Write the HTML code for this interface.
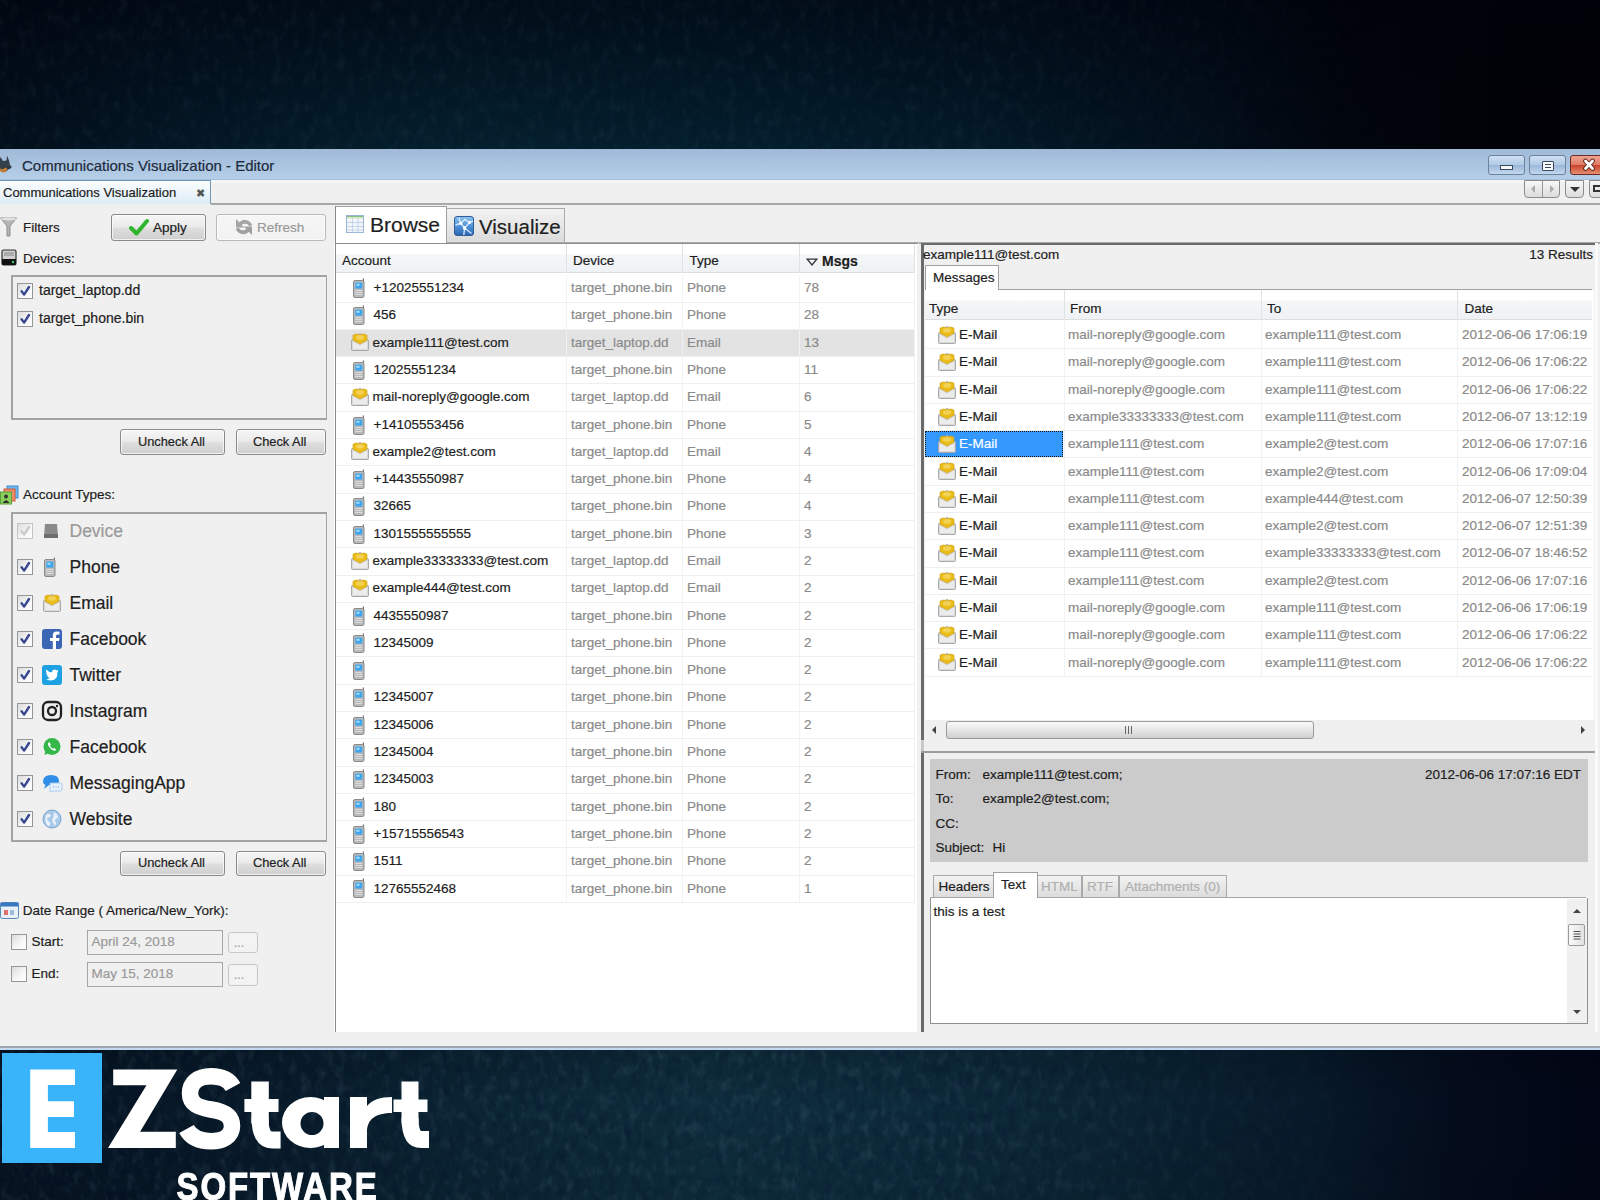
<!DOCTYPE html><html><head><meta charset="utf-8"><style>
html,body{margin:0;padding:0;width:1600px;height:1200px;overflow:hidden}
body{position:relative;font-family:"Liberation Sans",sans-serif;background:#06121f}
.b{position:absolute;display:block}
.t{position:absolute;white-space:nowrap;line-height:1;-webkit-text-stroke:0.2px currentColor}
.bg{position:absolute;left:0;width:1600px}
</style></head><body>
<div class="bg" style="top:0;height:150px;background:linear-gradient(90deg,#03101c 0%,#041826 12%,#05202e 28%,#041f2e 45%,#041a28 62%,#03101c 75%,#02060e 84%,#010208 93%,#010106 100%)"></div>
<div class="bg" style="top:0;height:150px;background:linear-gradient(rgba(0,2,10,.6),rgba(0,2,10,.3) 50%,rgba(0,0,0,0))"></div>
<div class="bg" style="top:1050px;height:150px;background:linear-gradient(90deg,#061422 0%,#081a29 15%,#0b2534 30%,#0e2d3c 45%,#0d2b3b 56%,#0b2433 70%,#081a2a 82%,#040c1c 91%,#020616 100%)"></div>
<div class="bg" style="top:1050px;height:150px;background:linear-gradient(rgba(0,0,0,.12),rgba(0,0,0,0) 35%,rgba(0,0,0,.08))"></div>
<svg class="b" style="left:0;top:0px;opacity:0.5;-webkit-mask-image:linear-gradient(90deg,#000 0%,#000 60%,transparent 88%)" width="1600" height="150"><defs><filter id="nz7" x="0" y="0" width="100%" height="100%"><feTurbulence type="fractalNoise" baseFrequency="0.11 0.07" numOctaves="3" seed="7"/><feColorMatrix values="0 0 0 0 0.5  0 0 0 0 0.72  0 0 0 0 0.85  0 0 0 1.8 -0.85"/></filter><filter id="nd7" x="0" y="0" width="100%" height="100%"><feTurbulence type="fractalNoise" baseFrequency="0.12 0.08" numOctaves="2" seed="18"/><feColorMatrix values="0 0 0 0 0  0 0 0 0 0  0 0 0 0 0.02  0 0 0 1.8 -0.8"/></filter></defs><rect width="1600" height="150" filter="url(#nz7)" opacity="0.12"/><rect width="1600" height="150" filter="url(#nd7)" opacity="0.25"/></svg>
<svg class="b" style="left:0;top:1050px;opacity:1;-webkit-mask-image:linear-gradient(90deg,#000 0%,#000 60%,transparent 88%)" width="1600" height="150"><defs><filter id="nz3" x="0" y="0" width="100%" height="100%"><feTurbulence type="fractalNoise" baseFrequency="0.11 0.07" numOctaves="3" seed="3"/><feColorMatrix values="0 0 0 0 0.5  0 0 0 0 0.72  0 0 0 0 0.85  0 0 0 1.8 -0.85"/></filter><filter id="nd3" x="0" y="0" width="100%" height="100%"><feTurbulence type="fractalNoise" baseFrequency="0.12 0.08" numOctaves="2" seed="14"/><feColorMatrix values="0 0 0 0 0  0 0 0 0 0  0 0 0 0 0.02  0 0 0 1.8 -0.8"/></filter></defs><rect width="1600" height="150" filter="url(#nz3)" opacity="0.12"/><rect width="1600" height="150" filter="url(#nd3)" opacity="0.25"/></svg>
<div class="b" style="left:0.00px;top:149.00px;width:1600.00px;height:31.00px;background:linear-gradient(#9fb9d7,#b6d0ea)"></div>
<div class="b" style="left:0.00px;top:179.00px;width:1600.00px;height:1.00px;background:#7f9cbc;opacity:.35"></div>
<div class="b" style="left:0.00px;top:180.00px;width:1600.00px;height:866.00px;background:#f0f0f0"></div>
<div class="b" style="left:0.00px;top:180.00px;width:1600.00px;height:3.00px;background:#f4f5f6"></div>
<div class="b" style="left:0.00px;top:1046.00px;width:1600.00px;height:2.00px;background:#9fa5ad"></div>
<div class="b" style="left:0.00px;top:1048.00px;width:1600.00px;height:2.00px;background:#c4d9ef"></div>
<svg class="b" style="left:-2.00px;top:154.00px" width="16" height="20" viewBox="0 0 16 20"><path d="M1 8 L2.5 3 L5 7 L8.5 6.5 L9 1.5 L11 6.5 L12 11 L14 13 L11.5 14 Q9 18 5 18 Q1 17 0.5 13 Z" fill="#34404a"/><path d="M1 13 Q3 16 6 14.5 Q8 13 9.5 15 Q8 18.5 5 18.5 Q1.5 18 1 13Z" fill="#c47c30"/><path d="M10 14 L13.5 13 L12 15Z" fill="#222"/></svg>
<div class="t" style="left:22.00px;top:158.25px;font-size:15px;color:#1c2a3c;font-weight:normal;">Communications Visualization - Editor</div>
<div class="b" style="left:1488.00px;top:155.00px;width:37.00px;height:20.00px;border:1px solid #6d8199;border-radius:3px;box-sizing:border-box;background:linear-gradient(#cfe0f3,#b0c9e5 50%,#9bb7d8 52%,#c2d8ef)"></div>
<div class="b" style="left:1500.00px;top:165.00px;width:13.00px;height:5.00px;background:#f4f6f9;border:1px solid #3b4b5f;box-sizing:border-box"></div>
<div class="b" style="left:1529.00px;top:155.00px;width:37.00px;height:20.00px;border:1px solid #6d8199;border-radius:3px;box-sizing:border-box;background:linear-gradient(#cfe0f3,#b0c9e5 50%,#9bb7d8 52%,#c2d8ef)"></div>
<div class="b" style="left:1541.50px;top:160.50px;width:12.50px;height:10.00px;background:#f7f9fb;border:1.3px solid #3b4b5f;border-radius:1px;box-sizing:border-box"></div>
<div class="b" style="left:1544.50px;top:164.00px;width:6.50px;height:1.30px;background:#3b4b5f"></div>
<div class="b" style="left:1544.50px;top:166.50px;width:6.50px;height:1.30px;background:#3b4b5f"></div>
<div class="b" style="left:1570.00px;top:155.00px;width:34.00px;height:20.00px;border:1px solid #6b2a22;border-radius:3px;box-sizing:border-box;background:linear-gradient(#f0a394,#e07b66 48%,#c9452c 52%,#e58f72)"></div>
<svg class="b" style="left:1581.00px;top:158.00px" width="16" height="14" viewBox="0 0 16 14"><path d="M4.5 3 L11.5 10.5 M11.5 3 L4.5 10.5" stroke="#5a2018" stroke-width="4.6" stroke-linecap="round"/><path d="M4.5 3 L11.5 10.5 M11.5 3 L4.5 10.5" stroke="#ffffff" stroke-width="2.8" stroke-linecap="round"/></svg>
<div class="b" style="left:0.00px;top:180.00px;width:211.00px;height:24.00px;background:linear-gradient(#fbfdff,#eef6fb 45%,#dcecf6);border-right:1.5px solid #7597b6;box-sizing:border-box"></div>
<div class="b" style="left:0.00px;top:180.00px;width:211.00px;height:1.30px;background:#6f94b6"></div>
<div class="t" style="left:3.00px;top:185.95px;font-size:13px;color:#1e1e1e;font-weight:normal;">Communications Visualization</div>
<div class="t" style="left:196.00px;top:187.65px;font-size:11px;color:#555;font-weight:normal;">✖</div>
<div class="b" style="left:211.00px;top:203.00px;width:1389.00px;height:2.00px;background:#a9a9a9"></div>
<div class="b" style="left:1524.00px;top:180.00px;width:36.00px;height:18.00px;border:1px solid #8c8c8c;border-radius:0 0 4px 4px;box-sizing:border-box;background:linear-gradient(#f7f7f7,#dcdcdc)"></div>
<div class="b" style="left:1542.00px;top:181.00px;width:1.00px;height:16.00px;background:#999"></div>
<svg class="b" style="left:1528.00px;top:183.00px" width="30" height="12" viewBox="0 0 30 12"><path d="M7 2 L3 6 L7 10Z" fill="#aaa"/><path d="M22 2 L26 6 L22 10Z" fill="#aaa"/></svg>
<div class="b" style="left:1565.00px;top:180.00px;width:19.00px;height:18.00px;border:1px solid #8c8c8c;border-radius:0 0 4px 4px;box-sizing:border-box;background:linear-gradient(#f7f7f7,#dcdcdc)"></div>
<svg class="b" style="left:1568.00px;top:184.00px" width="14" height="10" viewBox="0 0 14 10"><path d="M2 3 L12 3 L7 8Z" fill="#333"/></svg>
<div class="b" style="left:1589.00px;top:180.00px;width:19.00px;height:18.00px;border:1px solid #8c8c8c;border-radius:0 0 4px 4px;box-sizing:border-box;background:linear-gradient(#f7f7f7,#dcdcdc)"></div>
<div class="b" style="left:1593.00px;top:185.00px;width:11.00px;height:7.00px;border:2px solid #333;box-sizing:border-box"></div>
<svg class="b" style="left:0.00px;top:217.00px" width="17" height="21" viewBox="0 0 17 21"><path d="M0.5 1 H16.5 L10 9 V19 L7 19 V9 Z" fill="#b5b5b5" stroke="#8d8d8d" stroke-width="1"/><ellipse cx="8.5" cy="2" rx="8" ry="1.5" fill="#e2e2e2"/></svg>
<div class="t" style="left:23.00px;top:220.53px;font-size:13.5px;color:#1e1e1e;font-weight:normal;">Filters</div>
<div class="b" style="left:111.00px;top:214.00px;width:95.00px;height:27.00px;border:1px solid #8a8a8a;border-radius:3px;box-sizing:border-box;background:linear-gradient(#f6f6f6 0%,#ebebeb 45%,#dddddd 55%,#cfcfcf 100%);box-shadow:inset 0 0 0 1px rgba(255,255,255,.7)"></div>
<svg class="b" style="left:129.00px;top:218.00px" width="20" height="18" viewBox="0 0 20 18"><path d="M2 10 L7.5 15.5 L18 3" fill="none" stroke="#2db52d" stroke-width="4" stroke-linecap="round" stroke-linejoin="round"/></svg>
<div class="t" style="left:153.00px;top:220.53px;font-size:13.5px;color:#1e1e1e;font-weight:normal;">Apply</div>
<div class="b" style="left:216.00px;top:214.00px;width:110.00px;height:27.00px;border:1px solid #b9b9b9;border-radius:3px;box-sizing:border-box;background:linear-gradient(#f6f6f6,#f2f2f2);box-shadow:inset 0 0 0 1px rgba(255,255,255,.7)"></div>
<svg class="b" style="left:235.40px;top:217.70px" width="18" height="18" viewBox="0 0 18 18"><path d="M1 1 V9.5 H9.5 L6.6 6.9 Q9 4.9 12 6.1 Q13.5 6.9 14.2 8.6 L17.2 7.3 Q15.9 3.5 12 2.2 Q7.5 0.8 4.3 4.3 Z" fill="#a6a6a6"/><path d="M17 17 V8.5 H8.5 L11.4 11.1 Q9 13.1 6 11.9 Q4.5 11.1 3.8 9.4 L0.8 10.7 Q2.1 14.5 6 15.8 Q10.5 17.2 13.7 13.7 Z" fill="#a0a0a0"/></svg>
<div class="t" style="left:257.00px;top:220.53px;font-size:13.5px;color:#9a9a9a;font-weight:normal;">Refresh</div>
<svg class="b" style="left:1.00px;top:249.00px" width="16" height="17" viewBox="0 0 16 17"><rect x="1" y="1" width="14" height="15" rx="1.5" fill="#cfcfcf" stroke="#333" stroke-width="1.2"/><rect x="1" y="10" width="14" height="6" fill="#111"/><circle cx="12" cy="13" r="1.2" fill="#3c6"/><path d="M3 4h10M3 6h10" stroke="#888" stroke-width="1"/></svg>
<div class="t" style="left:23.00px;top:251.53px;font-size:13.5px;color:#1e1e1e;font-weight:normal;">Devices:</div>
<div class="b" style="left:11.00px;top:275.00px;width:316.00px;height:145.00px;border:2px solid #a3a3a3;border-right-width:1px;border-bottom-width:2px;box-sizing:border-box;background:#f0f0f0"></div>
<div class="b" style="left:17px;top:283px;width:16px;height:16px;box-sizing:border-box;border:1.3px solid #969696;background:linear-gradient(135deg,#dcdcdc,#f7f7f7 60%,#ffffff)"></div>
<svg class="b" style="left:19.00px;top:285.00px" width="12" height="12" viewBox="0 0 12 12"><path d="M2.6 6.3 L5.1 9.6 L10 2" fill="none" stroke="#3a4890" stroke-width="2.4" stroke-linecap="round" stroke-linejoin="round"/></svg>
<div class="t" style="left:39.00px;top:283.10px;font-size:14px;color:#1e1e1e;font-weight:normal;">target_laptop.dd</div>
<div class="b" style="left:17px;top:311px;width:16px;height:16px;box-sizing:border-box;border:1.3px solid #969696;background:linear-gradient(135deg,#dcdcdc,#f7f7f7 60%,#ffffff)"></div>
<svg class="b" style="left:19.00px;top:313.00px" width="12" height="12" viewBox="0 0 12 12"><path d="M2.6 6.3 L5.1 9.6 L10 2" fill="none" stroke="#3a4890" stroke-width="2.4" stroke-linecap="round" stroke-linejoin="round"/></svg>
<div class="t" style="left:39.00px;top:311.10px;font-size:14px;color:#1e1e1e;font-weight:normal;">target_phone.bin</div>
<div class="b" style="left:120.00px;top:429.00px;width:105.00px;height:26.00px;border:1px solid #8a8a8a;border-radius:3px;box-sizing:border-box;background:linear-gradient(#f6f6f6 0%,#ebebeb 45%,#dddddd 55%,#cfcfcf 100%);box-shadow:inset 0 0 0 1px rgba(255,255,255,.7)"></div>
<div class="t" style="left:138.00px;top:435.62px;font-size:12.8px;color:#1e1e1e;font-weight:normal;">Uncheck All</div>
<div class="b" style="left:236.00px;top:429.00px;width:90.00px;height:26.00px;border:1px solid #8a8a8a;border-radius:3px;box-sizing:border-box;background:linear-gradient(#f6f6f6 0%,#ebebeb 45%,#dddddd 55%,#cfcfcf 100%);box-shadow:inset 0 0 0 1px rgba(255,255,255,.7)"></div>
<div class="t" style="left:253.00px;top:435.62px;font-size:12.8px;color:#1e1e1e;font-weight:normal;">Check All</div>
<svg class="b" style="left:0.00px;top:485.00px" width="20" height="20" viewBox="0 0 20 20"><rect x="7" y="1" width="11" height="12" fill="#6ab8ee" stroke="#3a8fd0" stroke-width="1"/><rect x="4" y="4" width="11" height="12" fill="#f08a6a" stroke="#d05a3a" stroke-width="1"/><rect x="0.5" y="7" width="11" height="12" fill="#8ccf5a" stroke="#5aa03a" stroke-width="1"/><circle cx="6" cy="11.5" r="2" fill="#333"/><path d="M2.5 18 Q6 12.5 9.5 18Z" fill="#333"/></svg>
<div class="t" style="left:23.00px;top:488.02px;font-size:13.5px;color:#1e1e1e;font-weight:normal;">Account Types:</div>
<div class="b" style="left:11.00px;top:512.00px;width:316.00px;height:330.00px;border:2px solid #a3a3a3;border-right-width:1px;box-sizing:border-box;background:#f0f0f0"></div>
<div class="b" style="left:17px;top:523px;width:16px;height:16px;box-sizing:border-box;border:1.3px solid #c4c4c4;background:linear-gradient(135deg,#dcdcdc,#f7f7f7 60%,#ffffff)"></div>
<svg class="b" style="left:19.00px;top:525.00px" width="12" height="12" viewBox="0 0 12 12"><path d="M2.6 6.3 L5.1 9.6 L10 2" fill="none" stroke="#cacaca" stroke-width="2.4" stroke-linecap="round" stroke-linejoin="round"/></svg>
<div class="t" style="left:69.50px;top:523.12px;font-size:17.5px;color:#9a9a9a;font-weight:normal;">Device</div>
<svg class="b" style="left:43.00px;top:523.00px" width="16" height="16" viewBox="0 0 16 16"><path d="M2 1 H14 L15 13 H1Z" fill="#8a8a8a"/><rect x="1" y="11" width="14" height="4" fill="#6d6d6d"/></svg>
<div class="b" style="left:17px;top:559px;width:16px;height:16px;box-sizing:border-box;border:1.3px solid #969696;background:linear-gradient(135deg,#dcdcdc,#f7f7f7 60%,#ffffff)"></div>
<svg class="b" style="left:19.00px;top:561.00px" width="12" height="12" viewBox="0 0 12 12"><path d="M2.6 6.3 L5.1 9.6 L10 2" fill="none" stroke="#3a4890" stroke-width="2.4" stroke-linecap="round" stroke-linejoin="round"/></svg>
<div class="t" style="left:69.50px;top:559.12px;font-size:17.5px;color:#1e1e1e;font-weight:normal;">Phone</div>
<svg class="b" style="left:44.00px;top:557.00px" width="12" height="20" viewBox="0 0 12 20"><path d="M9.8 0.5h1.2v4h-1.2z" fill="#6d6d6d"/><rect x="0.5" y="2.5" width="10.5" height="17" rx="1.5" fill="#b9b9b9" stroke="#8a8a8a" stroke-width="1"/><rect x="2.3" y="4.6" width="7" height="6" fill="#3ea6ee"/><rect x="3.5" y="5.8" width="3" height="2" fill="#a8dcff"/><path d="M2.3 12.5h7M2.3 14.5h7M2.3 16.5h7" stroke="#dcdcdc" stroke-width="1"/></svg>
<div class="b" style="left:17px;top:595px;width:16px;height:16px;box-sizing:border-box;border:1.3px solid #969696;background:linear-gradient(135deg,#dcdcdc,#f7f7f7 60%,#ffffff)"></div>
<svg class="b" style="left:19.00px;top:597.00px" width="12" height="12" viewBox="0 0 12 12"><path d="M2.6 6.3 L5.1 9.6 L10 2" fill="none" stroke="#3a4890" stroke-width="2.4" stroke-linecap="round" stroke-linejoin="round"/></svg>
<div class="t" style="left:69.50px;top:595.12px;font-size:17.5px;color:#1e1e1e;font-weight:normal;">Email</div>
<svg class="b" style="left:43.00px;top:594.00px" width="18" height="18" viewBox="0 0 18 18"><rect x="0.5" y="6.5" width="17" height="11" rx="1" fill="#d9d9d9" stroke="#a9a9a9" stroke-width="1"/><rect x="2" y="9" width="14" height="7" fill="#ececec"/><path d="M0.8 7 L9 12 L17.2 7" fill="none" stroke="#c9c9c9" stroke-width="0.8"/><path d="M2 2.2 Q5 0.2 9 1.6 Q13 0.2 16 2.2 V7.2 L9 11 L2 7.2 Z" fill="#ebbd18" stroke="#c99b10" stroke-width="0.6"/><ellipse cx="9" cy="4.5" rx="4" ry="2.2" fill="#f7dc72" opacity="0.7"/><rect x="8" y="0" width="2" height="1.5" fill="#b8b8b8"/></svg>
<div class="b" style="left:17px;top:631px;width:16px;height:16px;box-sizing:border-box;border:1.3px solid #969696;background:linear-gradient(135deg,#dcdcdc,#f7f7f7 60%,#ffffff)"></div>
<svg class="b" style="left:19.00px;top:633.00px" width="12" height="12" viewBox="0 0 12 12"><path d="M2.6 6.3 L5.1 9.6 L10 2" fill="none" stroke="#3a4890" stroke-width="2.4" stroke-linecap="round" stroke-linejoin="round"/></svg>
<div class="t" style="left:69.50px;top:631.12px;font-size:17.5px;color:#1e1e1e;font-weight:normal;">Facebook</div>
<svg class="b" style="left:41.00px;top:628.00px" width="22" height="22" viewBox="0 0 22 22"><rect x="1" y="1" width="20" height="20" rx="3" fill="#3b65b5"/><path d="M15 21 V13 H18 L18.5 10 H15 V8 Q15 6.5 16.5 6.5 H18.5 V3.8 Q17 3.5 15.5 3.5 Q11.8 3.5 11.8 7.5 V10 H9 V13 H11.8 V21Z" fill="#fff"/></svg>
<div class="b" style="left:17px;top:667px;width:16px;height:16px;box-sizing:border-box;border:1.3px solid #969696;background:linear-gradient(135deg,#dcdcdc,#f7f7f7 60%,#ffffff)"></div>
<svg class="b" style="left:19.00px;top:669.00px" width="12" height="12" viewBox="0 0 12 12"><path d="M2.6 6.3 L5.1 9.6 L10 2" fill="none" stroke="#3a4890" stroke-width="2.4" stroke-linecap="round" stroke-linejoin="round"/></svg>
<div class="t" style="left:69.50px;top:667.12px;font-size:17.5px;color:#1e1e1e;font-weight:normal;">Twitter</div>
<svg class="b" style="left:41.00px;top:664.00px" width="22" height="22" viewBox="0 0 22 22"><rect x="1" y="1" width="20" height="20" rx="3" fill="#1da1e2"/><path d="M17.5 6.5 Q16.8 7 16 7.1 Q16.9 6.5 17.1 5.6 Q16.3 6.1 15.4 6.3 Q14.6 5.4 13.4 5.4 Q11 5.6 11 8.3 Q7.5 8.2 5.2 5.5 Q4.2 7.8 6.2 9.5 Q5.6 9.5 5.1 9.2 Q5.2 11.4 7.3 11.9 Q6.7 12.1 6.1 12 Q6.8 13.8 8.7 13.9 Q6.9 15.3 4.6 15.1 Q6.8 16.5 9.5 16.5 Q17 16.3 16.4 8.2 Q17.1 7.7 17.5 6.5Z" fill="#fff"/></svg>
<div class="b" style="left:17px;top:703px;width:16px;height:16px;box-sizing:border-box;border:1.3px solid #969696;background:linear-gradient(135deg,#dcdcdc,#f7f7f7 60%,#ffffff)"></div>
<svg class="b" style="left:19.00px;top:705.00px" width="12" height="12" viewBox="0 0 12 12"><path d="M2.6 6.3 L5.1 9.6 L10 2" fill="none" stroke="#3a4890" stroke-width="2.4" stroke-linecap="round" stroke-linejoin="round"/></svg>
<div class="t" style="left:69.50px;top:703.12px;font-size:17.5px;color:#1e1e1e;font-weight:normal;">Instagram</div>
<svg class="b" style="left:41.00px;top:700.00px" width="22" height="22" viewBox="0 0 22 22"><rect x="2" y="2" width="18" height="18" rx="5" fill="none" stroke="#222" stroke-width="2.3"/><circle cx="11" cy="11" r="4" fill="none" stroke="#222" stroke-width="2.3"/><circle cx="16" cy="6" r="1.2" fill="#222"/></svg>
<div class="b" style="left:17px;top:739px;width:16px;height:16px;box-sizing:border-box;border:1.3px solid #969696;background:linear-gradient(135deg,#dcdcdc,#f7f7f7 60%,#ffffff)"></div>
<svg class="b" style="left:19.00px;top:741.00px" width="12" height="12" viewBox="0 0 12 12"><path d="M2.6 6.3 L5.1 9.6 L10 2" fill="none" stroke="#3a4890" stroke-width="2.4" stroke-linecap="round" stroke-linejoin="round"/></svg>
<div class="t" style="left:69.50px;top:739.12px;font-size:17.5px;color:#1e1e1e;font-weight:normal;">Facebook</div>
<svg class="b" style="left:42.00px;top:737.00px" width="20" height="20" viewBox="0 0 20 20"><circle cx="10" cy="9.5" r="8.5" fill="#35b84a"/><path d="M2.5 18 L3.5 13 L7 16Z" fill="#35b84a"/><path d="M6.5 5.5 Q5.5 6.5 6.5 9 Q8.5 12.5 11.5 13.5 Q13.5 14.2 14 12.5 L12.3 11 L11 11.8 Q9 10.8 8 8.7 L8.8 7.5 L7.6 5.3Z" fill="#fff"/></svg>
<div class="b" style="left:17px;top:775px;width:16px;height:16px;box-sizing:border-box;border:1.3px solid #969696;background:linear-gradient(135deg,#dcdcdc,#f7f7f7 60%,#ffffff)"></div>
<svg class="b" style="left:19.00px;top:777.00px" width="12" height="12" viewBox="0 0 12 12"><path d="M2.6 6.3 L5.1 9.6 L10 2" fill="none" stroke="#3a4890" stroke-width="2.4" stroke-linecap="round" stroke-linejoin="round"/></svg>
<div class="t" style="left:69.50px;top:775.12px;font-size:17.5px;color:#1e1e1e;font-weight:normal;">MessagingApp</div>
<svg class="b" style="left:41.00px;top:773.00px" width="22" height="20" viewBox="0 0 22 20"><path d="M2 9 Q2 2 10 2 Q18 2 18 8 Q18 11 15 12 H8 L3 16 L4.5 12 Q2 11 2 9Z" fill="#2f8ee8"/><path d="M9 10 H19 Q21 10 21 12 V16 Q21 18 19 18 H12 L9 19Z" fill="#e8f2fc" stroke="#9cc4ec" stroke-width="0.8"/><path d="M12 14h1M14.5 14h1M17 14h1" stroke="#5a9ad8" stroke-width="1.2"/></svg>
<div class="b" style="left:17px;top:811px;width:16px;height:16px;box-sizing:border-box;border:1.3px solid #969696;background:linear-gradient(135deg,#dcdcdc,#f7f7f7 60%,#ffffff)"></div>
<svg class="b" style="left:19.00px;top:813.00px" width="12" height="12" viewBox="0 0 12 12"><path d="M2.6 6.3 L5.1 9.6 L10 2" fill="none" stroke="#3a4890" stroke-width="2.4" stroke-linecap="round" stroke-linejoin="round"/></svg>
<div class="t" style="left:69.50px;top:811.12px;font-size:17.5px;color:#1e1e1e;font-weight:normal;">Website</div>
<svg class="b" style="left:42.00px;top:809.00px" width="20" height="20" viewBox="0 0 20 20"><circle cx="10" cy="10" r="9" fill="#a9c9e8" stroke="#7ba3cc" stroke-width="1"/><path d="M4 6 Q7 4 9 6 Q8 9 5 9 Q5 12 8 13 Q9 17 6 17 Q2 13 4 6Z" fill="#e9f2fb"/><path d="M12 3 Q16 5 16 9 Q13 9 13 12 Q15 14 13 17 Q11 14 10 11 Q12 8 12 3Z" fill="#e9f2fb"/></svg>
<div class="b" style="left:120.00px;top:851.00px;width:105.00px;height:25.00px;border:1px solid #8a8a8a;border-radius:3px;box-sizing:border-box;background:linear-gradient(#f6f6f6 0%,#ebebeb 45%,#dddddd 55%,#cfcfcf 100%);box-shadow:inset 0 0 0 1px rgba(255,255,255,.7)"></div>
<div class="t" style="left:138.00px;top:857.12px;font-size:12.8px;color:#1e1e1e;font-weight:normal;">Uncheck All</div>
<div class="b" style="left:236.00px;top:851.00px;width:90.00px;height:25.00px;border:1px solid #8a8a8a;border-radius:3px;box-sizing:border-box;background:linear-gradient(#f6f6f6 0%,#ebebeb 45%,#dddddd 55%,#cfcfcf 100%);box-shadow:inset 0 0 0 1px rgba(255,255,255,.7)"></div>
<div class="t" style="left:253.00px;top:857.12px;font-size:12.8px;color:#1e1e1e;font-weight:normal;">Check All</div>
<svg class="b" style="left:0.00px;top:901.00px" width="19" height="18" viewBox="0 0 19 18"><rect x="0.5" y="1.5" width="18" height="16" rx="2" fill="#e8f0f8" stroke="#5a88b8" stroke-width="1"/><rect x="0.5" y="1.5" width="18" height="4" fill="#3a78c0"/><path d="M4 9 h4 v5 h-4z" fill="#e05050" opacity=".8"/><path d="M10 9 h4 v5 h-4z" fill="#6a9ad0" opacity=".6"/></svg>
<div class="t" style="left:22.70px;top:904.02px;font-size:13.5px;color:#1e1e1e;font-weight:normal;">Date Range ( America/New_York):</div>
<div class="b" style="left:11px;top:934px;width:16px;height:16px;box-sizing:border-box;border:1.3px solid #969696;background:linear-gradient(135deg,#dcdcdc,#f7f7f7 60%,#ffffff)"></div>
<div class="t" style="left:31.40px;top:934.52px;font-size:13.5px;color:#1e1e1e;font-weight:normal;">Start:</div>
<div class="b" style="left:87.00px;top:930.00px;width:136.00px;height:25.00px;border:1px solid #a5a5a5;box-sizing:border-box;background:#f0f0f0"></div>
<div class="t" style="left:91.50px;top:934.52px;font-size:13.5px;color:#9a9a9a;font-weight:normal;">April 24, 2018</div>
<div class="b" style="left:228.00px;top:932.00px;width:30.00px;height:21.00px;border:1px solid #c7c7c7;border-radius:3px;box-sizing:border-box;background:#f3f3f3"></div>
<div class="t" style="left:234.00px;top:936.80px;font-size:12px;color:#a0a0a0;font-weight:normal;">...</div>
<div class="b" style="left:11px;top:966px;width:16px;height:16px;box-sizing:border-box;border:1.3px solid #969696;background:linear-gradient(135deg,#dcdcdc,#f7f7f7 60%,#ffffff)"></div>
<div class="t" style="left:31.40px;top:966.52px;font-size:13.5px;color:#1e1e1e;font-weight:normal;">End:</div>
<div class="b" style="left:87.00px;top:962.00px;width:136.00px;height:25.00px;border:1px solid #a5a5a5;box-sizing:border-box;background:#f0f0f0"></div>
<div class="t" style="left:91.50px;top:966.52px;font-size:13.5px;color:#9a9a9a;font-weight:normal;">May 15, 2018</div>
<div class="b" style="left:228.00px;top:964.00px;width:30.00px;height:22.00px;border:1px solid #c7c7c7;border-radius:3px;box-sizing:border-box;background:#f3f3f3"></div>
<div class="t" style="left:234.00px;top:968.80px;font-size:12px;color:#a0a0a0;font-weight:normal;">...</div>
<div class="b" style="left:335.00px;top:206.00px;width:112.00px;height:39.00px;background:#fff;border:1px solid #a0a0a0;border-bottom:none;box-sizing:border-box"></div>
<div class="b" style="left:447.00px;top:208.00px;width:118.00px;height:36.00px;background:linear-gradient(#f2f2f2,#dadada);border:1px solid #a9a9a9;border-bottom:none;border-left:none;box-sizing:border-box"></div>
<div class="b" style="left:447.00px;top:242.00px;width:1153.00px;height:2.00px;background:#a9a9a9"></div>
<svg class="b" style="left:346.00px;top:215.00px" width="18" height="18" viewBox="0 0 18 18"><rect x="0.5" y="0.5" width="17" height="17" fill="#f2f6fb" stroke="#9bb5d6" stroke-width="1"/><rect x="1" y="1" width="16" height="2.5" fill="#cfe6c8"/><path d="M1 1.5 H17" stroke="#8cc080" stroke-width="1"/><path d="M1 7.5h16M1 11.5h16M1 15h16M6.5 3.5v14M12 3.5v14" stroke="#c3d4ea" stroke-width="1"/></svg>
<div class="t" style="left:370.00px;top:214.15px;font-size:21px;color:#1e1e1e;font-weight:normal;">Browse</div>
<svg class="b" style="left:454.00px;top:216.00px" width="20" height="20" viewBox="0 0 20 20"><defs><linearGradient id="vg" x1="0" y1="0" x2="0" y2="1"><stop offset="0" stop-color="#8cc4f2"/><stop offset="0.5" stop-color="#4f93d8"/><stop offset="1" stop-color="#2a66b0"/></linearGradient></defs><rect x="0.5" y="0.5" width="19" height="19" rx="2.5" fill="url(#vg)" stroke="#2f5f98" stroke-width="1"/><path d="M1.5 9 L6.7 7.3 L10.6 12 L15.5 6.5 L19 5 M6.7 7.3 L5 2 M10.6 12 L9.8 19 M10.6 12 L17.5 17.5 M6.7 7.3 L11 3.5 L15.5 6.5" fill="none" stroke="#e4f2ff" stroke-width="1.4" opacity="0.9"/><circle cx="6.7" cy="7.3" r="1.6" fill="#fff"/><circle cx="15.5" cy="6.5" r="1.5" fill="#fff"/><circle cx="10.6" cy="12" r="1.7" fill="#fff"/></svg>
<div class="t" style="left:479.00px;top:217.07px;font-size:20.5px;color:#1e1e1e;font-weight:normal;">Visualize</div>
<div class="b" style="left:334.00px;top:243.00px;width:585.00px;height:789.00px;background:#fff"></div>
<div class="b" style="left:334.50px;top:206.00px;width:1.50px;height:826.00px;background:#8a8a8a"></div>
<div class="b" style="left:336.00px;top:242.80px;width:582.00px;height:1.70px;background:#8f8f8f"></div>
<div class="b" style="left:917.00px;top:244.00px;width:4.00px;height:788.00px;background:#f0f0f0"></div>
<div class="b" style="left:336.00px;top:244.50px;width:579.00px;height:28.50px;background:linear-gradient(#ffffff 0%,#ffffff 33%,#f4f6f8 36%,#eff2f5 100%);border-bottom:1px solid #dedede;box-sizing:border-box"></div>
<div class="b" style="left:566.00px;top:244.00px;width:1.00px;height:29.00px;background:#e2e2e2"></div>
<div class="b" style="left:682.00px;top:244.00px;width:1.00px;height:29.00px;background:#e2e2e2"></div>
<div class="b" style="left:799.00px;top:244.00px;width:1.00px;height:29.00px;background:#e2e2e2"></div>
<div class="b" style="left:914.00px;top:244.00px;width:1.00px;height:29.00px;background:#e2e2e2"></div>
<div class="t" style="left:342.00px;top:253.53px;font-size:13.5px;color:#1e1e1e;font-weight:normal;">Account</div>
<div class="t" style="left:573.00px;top:253.53px;font-size:13.5px;color:#1e1e1e;font-weight:normal;">Device</div>
<div class="t" style="left:689.50px;top:253.53px;font-size:13.5px;color:#1e1e1e;font-weight:normal;">Type</div>
<svg class="b" style="left:806.00px;top:257.50px" width="12" height="8" viewBox="0 0 12 8"><path d="M1.2 1.2 H10.8 L6 7Z" fill="none" stroke="#333" stroke-width="1.3"/></svg>
<div class="t" style="left:822.00px;top:253.60px;font-size:14px;color:#1e1e1e;font-weight:bold;">Msgs</div>
<div class="b" style="left:336.00px;top:301.60px;width:579.00px;height:1.00px;background:#efefef"></div>
<div class="b" style="left:566.00px;top:274.81px;width:1.00px;height:27.29px;background:#f2f2f2"></div>
<div class="b" style="left:682.00px;top:274.81px;width:1.00px;height:27.29px;background:#f2f2f2"></div>
<div class="b" style="left:799.00px;top:274.81px;width:1.00px;height:27.29px;background:#f2f2f2"></div>
<div class="b" style="left:914.00px;top:274.81px;width:1.00px;height:27.29px;background:#f2f2f2"></div>
<svg class="b" style="left:353.00px;top:278.10px" width="12" height="20" viewBox="0 0 12 20"><path d="M9.8 0.5h1.2v4h-1.2z" fill="#6d6d6d"/><rect x="0.5" y="2.5" width="10.5" height="17" rx="1.5" fill="#b9b9b9" stroke="#8a8a8a" stroke-width="1"/><rect x="2.3" y="4.6" width="7" height="6" fill="#3ea6ee"/><rect x="3.5" y="5.8" width="3" height="2" fill="#a8dcff"/><path d="M2.3 12.5h7M2.3 14.5h7M2.3 16.5h7" stroke="#dcdcdc" stroke-width="1"/></svg>
<div class="t" style="left:373.50px;top:281.12px;font-size:13.5px;color:#1e1e1e;font-weight:normal;">+12025551234</div>
<div class="t" style="left:571.00px;top:281.12px;font-size:13.5px;color:#8a8a8a;font-weight:normal;">target_phone.bin</div>
<div class="t" style="left:687.00px;top:281.12px;font-size:13.5px;color:#8a8a8a;font-weight:normal;">Phone</div>
<div class="t" style="left:804.00px;top:281.12px;font-size:13.5px;color:#8a8a8a;font-weight:normal;">78</div>
<div class="b" style="left:336.00px;top:328.89px;width:579.00px;height:1.00px;background:#efefef"></div>
<div class="b" style="left:566.00px;top:302.10px;width:1.00px;height:27.29px;background:#f2f2f2"></div>
<div class="b" style="left:682.00px;top:302.10px;width:1.00px;height:27.29px;background:#f2f2f2"></div>
<div class="b" style="left:799.00px;top:302.10px;width:1.00px;height:27.29px;background:#f2f2f2"></div>
<div class="b" style="left:914.00px;top:302.10px;width:1.00px;height:27.29px;background:#f2f2f2"></div>
<svg class="b" style="left:353.00px;top:305.39px" width="12" height="20" viewBox="0 0 12 20"><path d="M9.8 0.5h1.2v4h-1.2z" fill="#6d6d6d"/><rect x="0.5" y="2.5" width="10.5" height="17" rx="1.5" fill="#b9b9b9" stroke="#8a8a8a" stroke-width="1"/><rect x="2.3" y="4.6" width="7" height="6" fill="#3ea6ee"/><rect x="3.5" y="5.8" width="3" height="2" fill="#a8dcff"/><path d="M2.3 12.5h7M2.3 14.5h7M2.3 16.5h7" stroke="#dcdcdc" stroke-width="1"/></svg>
<div class="t" style="left:373.50px;top:308.42px;font-size:13.5px;color:#1e1e1e;font-weight:normal;">456</div>
<div class="t" style="left:571.00px;top:308.42px;font-size:13.5px;color:#8a8a8a;font-weight:normal;">target_phone.bin</div>
<div class="t" style="left:687.00px;top:308.42px;font-size:13.5px;color:#8a8a8a;font-weight:normal;">Phone</div>
<div class="t" style="left:804.00px;top:308.42px;font-size:13.5px;color:#8a8a8a;font-weight:normal;">28</div>
<div class="b" style="left:336.00px;top:329.89px;width:579.00px;height:27.29px;background:#e3e3e3"></div>
<div class="b" style="left:336.00px;top:356.18px;width:579.00px;height:1.00px;background:#efefef"></div>
<div class="b" style="left:566.00px;top:329.39px;width:1.00px;height:27.29px;background:#f2f2f2"></div>
<div class="b" style="left:682.00px;top:329.39px;width:1.00px;height:27.29px;background:#f2f2f2"></div>
<div class="b" style="left:799.00px;top:329.39px;width:1.00px;height:27.29px;background:#f2f2f2"></div>
<div class="b" style="left:914.00px;top:329.39px;width:1.00px;height:27.29px;background:#f2f2f2"></div>
<svg class="b" style="left:350.50px;top:333.18px" width="18" height="18" viewBox="0 0 18 18"><rect x="0.5" y="6.5" width="17" height="11" rx="1" fill="#d9d9d9" stroke="#a9a9a9" stroke-width="1"/><rect x="2" y="9" width="14" height="7" fill="#ececec"/><path d="M0.8 7 L9 12 L17.2 7" fill="none" stroke="#c9c9c9" stroke-width="0.8"/><path d="M2 2.2 Q5 0.2 9 1.6 Q13 0.2 16 2.2 V7.2 L9 11 L2 7.2 Z" fill="#ebbd18" stroke="#c99b10" stroke-width="0.6"/><ellipse cx="9" cy="4.5" rx="4" ry="2.2" fill="#f7dc72" opacity="0.7"/><rect x="8" y="0" width="2" height="1.5" fill="#b8b8b8"/></svg>
<div class="t" style="left:372.50px;top:335.70px;font-size:13.5px;color:#1e1e1e;font-weight:normal;">example111@test.com</div>
<div class="t" style="left:571.00px;top:335.70px;font-size:13.5px;color:#8a8a8a;font-weight:normal;">target_laptop.dd</div>
<div class="t" style="left:687.00px;top:335.70px;font-size:13.5px;color:#8a8a8a;font-weight:normal;">Email</div>
<div class="t" style="left:804.00px;top:335.70px;font-size:13.5px;color:#8a8a8a;font-weight:normal;">13</div>
<div class="b" style="left:336.00px;top:383.47px;width:579.00px;height:1.00px;background:#efefef"></div>
<div class="b" style="left:566.00px;top:356.68px;width:1.00px;height:27.29px;background:#f2f2f2"></div>
<div class="b" style="left:682.00px;top:356.68px;width:1.00px;height:27.29px;background:#f2f2f2"></div>
<div class="b" style="left:799.00px;top:356.68px;width:1.00px;height:27.29px;background:#f2f2f2"></div>
<div class="b" style="left:914.00px;top:356.68px;width:1.00px;height:27.29px;background:#f2f2f2"></div>
<svg class="b" style="left:353.00px;top:359.97px" width="12" height="20" viewBox="0 0 12 20"><path d="M9.8 0.5h1.2v4h-1.2z" fill="#6d6d6d"/><rect x="0.5" y="2.5" width="10.5" height="17" rx="1.5" fill="#b9b9b9" stroke="#8a8a8a" stroke-width="1"/><rect x="2.3" y="4.6" width="7" height="6" fill="#3ea6ee"/><rect x="3.5" y="5.8" width="3" height="2" fill="#a8dcff"/><path d="M2.3 12.5h7M2.3 14.5h7M2.3 16.5h7" stroke="#dcdcdc" stroke-width="1"/></svg>
<div class="t" style="left:373.50px;top:363.00px;font-size:13.5px;color:#1e1e1e;font-weight:normal;">12025551234</div>
<div class="t" style="left:571.00px;top:363.00px;font-size:13.5px;color:#8a8a8a;font-weight:normal;">target_phone.bin</div>
<div class="t" style="left:687.00px;top:363.00px;font-size:13.5px;color:#8a8a8a;font-weight:normal;">Phone</div>
<div class="t" style="left:804.00px;top:363.00px;font-size:13.5px;color:#8a8a8a;font-weight:normal;">11</div>
<div class="b" style="left:336.00px;top:410.76px;width:579.00px;height:1.00px;background:#efefef"></div>
<div class="b" style="left:566.00px;top:383.97px;width:1.00px;height:27.29px;background:#f2f2f2"></div>
<div class="b" style="left:682.00px;top:383.97px;width:1.00px;height:27.29px;background:#f2f2f2"></div>
<div class="b" style="left:799.00px;top:383.97px;width:1.00px;height:27.29px;background:#f2f2f2"></div>
<div class="b" style="left:914.00px;top:383.97px;width:1.00px;height:27.29px;background:#f2f2f2"></div>
<svg class="b" style="left:350.50px;top:387.76px" width="18" height="18" viewBox="0 0 18 18"><rect x="0.5" y="6.5" width="17" height="11" rx="1" fill="#d9d9d9" stroke="#a9a9a9" stroke-width="1"/><rect x="2" y="9" width="14" height="7" fill="#ececec"/><path d="M0.8 7 L9 12 L17.2 7" fill="none" stroke="#c9c9c9" stroke-width="0.8"/><path d="M2 2.2 Q5 0.2 9 1.6 Q13 0.2 16 2.2 V7.2 L9 11 L2 7.2 Z" fill="#ebbd18" stroke="#c99b10" stroke-width="0.6"/><ellipse cx="9" cy="4.5" rx="4" ry="2.2" fill="#f7dc72" opacity="0.7"/><rect x="8" y="0" width="2" height="1.5" fill="#b8b8b8"/></svg>
<div class="t" style="left:372.50px;top:390.28px;font-size:13.5px;color:#1e1e1e;font-weight:normal;">mail-noreply@google.com</div>
<div class="t" style="left:571.00px;top:390.28px;font-size:13.5px;color:#8a8a8a;font-weight:normal;">target_laptop.dd</div>
<div class="t" style="left:687.00px;top:390.28px;font-size:13.5px;color:#8a8a8a;font-weight:normal;">Email</div>
<div class="t" style="left:804.00px;top:390.28px;font-size:13.5px;color:#8a8a8a;font-weight:normal;">6</div>
<div class="b" style="left:336.00px;top:438.05px;width:579.00px;height:1.00px;background:#efefef"></div>
<div class="b" style="left:566.00px;top:411.26px;width:1.00px;height:27.29px;background:#f2f2f2"></div>
<div class="b" style="left:682.00px;top:411.26px;width:1.00px;height:27.29px;background:#f2f2f2"></div>
<div class="b" style="left:799.00px;top:411.26px;width:1.00px;height:27.29px;background:#f2f2f2"></div>
<div class="b" style="left:914.00px;top:411.26px;width:1.00px;height:27.29px;background:#f2f2f2"></div>
<svg class="b" style="left:353.00px;top:414.55px" width="12" height="20" viewBox="0 0 12 20"><path d="M9.8 0.5h1.2v4h-1.2z" fill="#6d6d6d"/><rect x="0.5" y="2.5" width="10.5" height="17" rx="1.5" fill="#b9b9b9" stroke="#8a8a8a" stroke-width="1"/><rect x="2.3" y="4.6" width="7" height="6" fill="#3ea6ee"/><rect x="3.5" y="5.8" width="3" height="2" fill="#a8dcff"/><path d="M2.3 12.5h7M2.3 14.5h7M2.3 16.5h7" stroke="#dcdcdc" stroke-width="1"/></svg>
<div class="t" style="left:373.50px;top:417.57px;font-size:13.5px;color:#1e1e1e;font-weight:normal;">+14105553456</div>
<div class="t" style="left:571.00px;top:417.57px;font-size:13.5px;color:#8a8a8a;font-weight:normal;">target_phone.bin</div>
<div class="t" style="left:687.00px;top:417.57px;font-size:13.5px;color:#8a8a8a;font-weight:normal;">Phone</div>
<div class="t" style="left:804.00px;top:417.57px;font-size:13.5px;color:#8a8a8a;font-weight:normal;">5</div>
<div class="b" style="left:336.00px;top:465.34px;width:579.00px;height:1.00px;background:#efefef"></div>
<div class="b" style="left:566.00px;top:438.55px;width:1.00px;height:27.29px;background:#f2f2f2"></div>
<div class="b" style="left:682.00px;top:438.55px;width:1.00px;height:27.29px;background:#f2f2f2"></div>
<div class="b" style="left:799.00px;top:438.55px;width:1.00px;height:27.29px;background:#f2f2f2"></div>
<div class="b" style="left:914.00px;top:438.55px;width:1.00px;height:27.29px;background:#f2f2f2"></div>
<svg class="b" style="left:350.50px;top:442.34px" width="18" height="18" viewBox="0 0 18 18"><rect x="0.5" y="6.5" width="17" height="11" rx="1" fill="#d9d9d9" stroke="#a9a9a9" stroke-width="1"/><rect x="2" y="9" width="14" height="7" fill="#ececec"/><path d="M0.8 7 L9 12 L17.2 7" fill="none" stroke="#c9c9c9" stroke-width="0.8"/><path d="M2 2.2 Q5 0.2 9 1.6 Q13 0.2 16 2.2 V7.2 L9 11 L2 7.2 Z" fill="#ebbd18" stroke="#c99b10" stroke-width="0.6"/><ellipse cx="9" cy="4.5" rx="4" ry="2.2" fill="#f7dc72" opacity="0.7"/><rect x="8" y="0" width="2" height="1.5" fill="#b8b8b8"/></svg>
<div class="t" style="left:372.50px;top:444.87px;font-size:13.5px;color:#1e1e1e;font-weight:normal;">example2@test.com</div>
<div class="t" style="left:571.00px;top:444.87px;font-size:13.5px;color:#8a8a8a;font-weight:normal;">target_laptop.dd</div>
<div class="t" style="left:687.00px;top:444.87px;font-size:13.5px;color:#8a8a8a;font-weight:normal;">Email</div>
<div class="t" style="left:804.00px;top:444.87px;font-size:13.5px;color:#8a8a8a;font-weight:normal;">4</div>
<div class="b" style="left:336.00px;top:492.63px;width:579.00px;height:1.00px;background:#efefef"></div>
<div class="b" style="left:566.00px;top:465.84px;width:1.00px;height:27.29px;background:#f2f2f2"></div>
<div class="b" style="left:682.00px;top:465.84px;width:1.00px;height:27.29px;background:#f2f2f2"></div>
<div class="b" style="left:799.00px;top:465.84px;width:1.00px;height:27.29px;background:#f2f2f2"></div>
<div class="b" style="left:914.00px;top:465.84px;width:1.00px;height:27.29px;background:#f2f2f2"></div>
<svg class="b" style="left:353.00px;top:469.13px" width="12" height="20" viewBox="0 0 12 20"><path d="M9.8 0.5h1.2v4h-1.2z" fill="#6d6d6d"/><rect x="0.5" y="2.5" width="10.5" height="17" rx="1.5" fill="#b9b9b9" stroke="#8a8a8a" stroke-width="1"/><rect x="2.3" y="4.6" width="7" height="6" fill="#3ea6ee"/><rect x="3.5" y="5.8" width="3" height="2" fill="#a8dcff"/><path d="M2.3 12.5h7M2.3 14.5h7M2.3 16.5h7" stroke="#dcdcdc" stroke-width="1"/></svg>
<div class="t" style="left:373.50px;top:472.15px;font-size:13.5px;color:#1e1e1e;font-weight:normal;">+14435550987</div>
<div class="t" style="left:571.00px;top:472.15px;font-size:13.5px;color:#8a8a8a;font-weight:normal;">target_phone.bin</div>
<div class="t" style="left:687.00px;top:472.15px;font-size:13.5px;color:#8a8a8a;font-weight:normal;">Phone</div>
<div class="t" style="left:804.00px;top:472.15px;font-size:13.5px;color:#8a8a8a;font-weight:normal;">4</div>
<div class="b" style="left:336.00px;top:519.92px;width:579.00px;height:1.00px;background:#efefef"></div>
<div class="b" style="left:566.00px;top:493.13px;width:1.00px;height:27.29px;background:#f2f2f2"></div>
<div class="b" style="left:682.00px;top:493.13px;width:1.00px;height:27.29px;background:#f2f2f2"></div>
<div class="b" style="left:799.00px;top:493.13px;width:1.00px;height:27.29px;background:#f2f2f2"></div>
<div class="b" style="left:914.00px;top:493.13px;width:1.00px;height:27.29px;background:#f2f2f2"></div>
<svg class="b" style="left:353.00px;top:496.42px" width="12" height="20" viewBox="0 0 12 20"><path d="M9.8 0.5h1.2v4h-1.2z" fill="#6d6d6d"/><rect x="0.5" y="2.5" width="10.5" height="17" rx="1.5" fill="#b9b9b9" stroke="#8a8a8a" stroke-width="1"/><rect x="2.3" y="4.6" width="7" height="6" fill="#3ea6ee"/><rect x="3.5" y="5.8" width="3" height="2" fill="#a8dcff"/><path d="M2.3 12.5h7M2.3 14.5h7M2.3 16.5h7" stroke="#dcdcdc" stroke-width="1"/></svg>
<div class="t" style="left:373.50px;top:499.45px;font-size:13.5px;color:#1e1e1e;font-weight:normal;">32665</div>
<div class="t" style="left:571.00px;top:499.45px;font-size:13.5px;color:#8a8a8a;font-weight:normal;">target_phone.bin</div>
<div class="t" style="left:687.00px;top:499.45px;font-size:13.5px;color:#8a8a8a;font-weight:normal;">Phone</div>
<div class="t" style="left:804.00px;top:499.45px;font-size:13.5px;color:#8a8a8a;font-weight:normal;">4</div>
<div class="b" style="left:336.00px;top:547.21px;width:579.00px;height:1.00px;background:#efefef"></div>
<div class="b" style="left:566.00px;top:520.42px;width:1.00px;height:27.29px;background:#f2f2f2"></div>
<div class="b" style="left:682.00px;top:520.42px;width:1.00px;height:27.29px;background:#f2f2f2"></div>
<div class="b" style="left:799.00px;top:520.42px;width:1.00px;height:27.29px;background:#f2f2f2"></div>
<div class="b" style="left:914.00px;top:520.42px;width:1.00px;height:27.29px;background:#f2f2f2"></div>
<svg class="b" style="left:353.00px;top:523.71px" width="12" height="20" viewBox="0 0 12 20"><path d="M9.8 0.5h1.2v4h-1.2z" fill="#6d6d6d"/><rect x="0.5" y="2.5" width="10.5" height="17" rx="1.5" fill="#b9b9b9" stroke="#8a8a8a" stroke-width="1"/><rect x="2.3" y="4.6" width="7" height="6" fill="#3ea6ee"/><rect x="3.5" y="5.8" width="3" height="2" fill="#a8dcff"/><path d="M2.3 12.5h7M2.3 14.5h7M2.3 16.5h7" stroke="#dcdcdc" stroke-width="1"/></svg>
<div class="t" style="left:373.50px;top:526.74px;font-size:13.5px;color:#1e1e1e;font-weight:normal;">1301555555555</div>
<div class="t" style="left:571.00px;top:526.74px;font-size:13.5px;color:#8a8a8a;font-weight:normal;">target_phone.bin</div>
<div class="t" style="left:687.00px;top:526.74px;font-size:13.5px;color:#8a8a8a;font-weight:normal;">Phone</div>
<div class="t" style="left:804.00px;top:526.74px;font-size:13.5px;color:#8a8a8a;font-weight:normal;">3</div>
<div class="b" style="left:336.00px;top:574.50px;width:579.00px;height:1.00px;background:#efefef"></div>
<div class="b" style="left:566.00px;top:547.71px;width:1.00px;height:27.29px;background:#f2f2f2"></div>
<div class="b" style="left:682.00px;top:547.71px;width:1.00px;height:27.29px;background:#f2f2f2"></div>
<div class="b" style="left:799.00px;top:547.71px;width:1.00px;height:27.29px;background:#f2f2f2"></div>
<div class="b" style="left:914.00px;top:547.71px;width:1.00px;height:27.29px;background:#f2f2f2"></div>
<svg class="b" style="left:350.50px;top:551.50px" width="18" height="18" viewBox="0 0 18 18"><rect x="0.5" y="6.5" width="17" height="11" rx="1" fill="#d9d9d9" stroke="#a9a9a9" stroke-width="1"/><rect x="2" y="9" width="14" height="7" fill="#ececec"/><path d="M0.8 7 L9 12 L17.2 7" fill="none" stroke="#c9c9c9" stroke-width="0.8"/><path d="M2 2.2 Q5 0.2 9 1.6 Q13 0.2 16 2.2 V7.2 L9 11 L2 7.2 Z" fill="#ebbd18" stroke="#c99b10" stroke-width="0.6"/><ellipse cx="9" cy="4.5" rx="4" ry="2.2" fill="#f7dc72" opacity="0.7"/><rect x="8" y="0" width="2" height="1.5" fill="#b8b8b8"/></svg>
<div class="t" style="left:372.50px;top:554.02px;font-size:13.5px;color:#1e1e1e;font-weight:normal;">example33333333@test.com</div>
<div class="t" style="left:571.00px;top:554.02px;font-size:13.5px;color:#8a8a8a;font-weight:normal;">target_laptop.dd</div>
<div class="t" style="left:687.00px;top:554.02px;font-size:13.5px;color:#8a8a8a;font-weight:normal;">Email</div>
<div class="t" style="left:804.00px;top:554.02px;font-size:13.5px;color:#8a8a8a;font-weight:normal;">2</div>
<div class="b" style="left:336.00px;top:601.79px;width:579.00px;height:1.00px;background:#efefef"></div>
<div class="b" style="left:566.00px;top:575.00px;width:1.00px;height:27.29px;background:#f2f2f2"></div>
<div class="b" style="left:682.00px;top:575.00px;width:1.00px;height:27.29px;background:#f2f2f2"></div>
<div class="b" style="left:799.00px;top:575.00px;width:1.00px;height:27.29px;background:#f2f2f2"></div>
<div class="b" style="left:914.00px;top:575.00px;width:1.00px;height:27.29px;background:#f2f2f2"></div>
<svg class="b" style="left:350.50px;top:578.79px" width="18" height="18" viewBox="0 0 18 18"><rect x="0.5" y="6.5" width="17" height="11" rx="1" fill="#d9d9d9" stroke="#a9a9a9" stroke-width="1"/><rect x="2" y="9" width="14" height="7" fill="#ececec"/><path d="M0.8 7 L9 12 L17.2 7" fill="none" stroke="#c9c9c9" stroke-width="0.8"/><path d="M2 2.2 Q5 0.2 9 1.6 Q13 0.2 16 2.2 V7.2 L9 11 L2 7.2 Z" fill="#ebbd18" stroke="#c99b10" stroke-width="0.6"/><ellipse cx="9" cy="4.5" rx="4" ry="2.2" fill="#f7dc72" opacity="0.7"/><rect x="8" y="0" width="2" height="1.5" fill="#b8b8b8"/></svg>
<div class="t" style="left:372.50px;top:581.31px;font-size:13.5px;color:#1e1e1e;font-weight:normal;">example444@test.com</div>
<div class="t" style="left:571.00px;top:581.31px;font-size:13.5px;color:#8a8a8a;font-weight:normal;">target_laptop.dd</div>
<div class="t" style="left:687.00px;top:581.31px;font-size:13.5px;color:#8a8a8a;font-weight:normal;">Email</div>
<div class="t" style="left:804.00px;top:581.31px;font-size:13.5px;color:#8a8a8a;font-weight:normal;">2</div>
<div class="b" style="left:336.00px;top:629.08px;width:579.00px;height:1.00px;background:#efefef"></div>
<div class="b" style="left:566.00px;top:602.29px;width:1.00px;height:27.29px;background:#f2f2f2"></div>
<div class="b" style="left:682.00px;top:602.29px;width:1.00px;height:27.29px;background:#f2f2f2"></div>
<div class="b" style="left:799.00px;top:602.29px;width:1.00px;height:27.29px;background:#f2f2f2"></div>
<div class="b" style="left:914.00px;top:602.29px;width:1.00px;height:27.29px;background:#f2f2f2"></div>
<svg class="b" style="left:353.00px;top:605.58px" width="12" height="20" viewBox="0 0 12 20"><path d="M9.8 0.5h1.2v4h-1.2z" fill="#6d6d6d"/><rect x="0.5" y="2.5" width="10.5" height="17" rx="1.5" fill="#b9b9b9" stroke="#8a8a8a" stroke-width="1"/><rect x="2.3" y="4.6" width="7" height="6" fill="#3ea6ee"/><rect x="3.5" y="5.8" width="3" height="2" fill="#a8dcff"/><path d="M2.3 12.5h7M2.3 14.5h7M2.3 16.5h7" stroke="#dcdcdc" stroke-width="1"/></svg>
<div class="t" style="left:373.50px;top:608.61px;font-size:13.5px;color:#1e1e1e;font-weight:normal;">4435550987</div>
<div class="t" style="left:571.00px;top:608.61px;font-size:13.5px;color:#8a8a8a;font-weight:normal;">target_phone.bin</div>
<div class="t" style="left:687.00px;top:608.61px;font-size:13.5px;color:#8a8a8a;font-weight:normal;">Phone</div>
<div class="t" style="left:804.00px;top:608.61px;font-size:13.5px;color:#8a8a8a;font-weight:normal;">2</div>
<div class="b" style="left:336.00px;top:656.37px;width:579.00px;height:1.00px;background:#efefef"></div>
<div class="b" style="left:566.00px;top:629.58px;width:1.00px;height:27.29px;background:#f2f2f2"></div>
<div class="b" style="left:682.00px;top:629.58px;width:1.00px;height:27.29px;background:#f2f2f2"></div>
<div class="b" style="left:799.00px;top:629.58px;width:1.00px;height:27.29px;background:#f2f2f2"></div>
<div class="b" style="left:914.00px;top:629.58px;width:1.00px;height:27.29px;background:#f2f2f2"></div>
<svg class="b" style="left:353.00px;top:632.87px" width="12" height="20" viewBox="0 0 12 20"><path d="M9.8 0.5h1.2v4h-1.2z" fill="#6d6d6d"/><rect x="0.5" y="2.5" width="10.5" height="17" rx="1.5" fill="#b9b9b9" stroke="#8a8a8a" stroke-width="1"/><rect x="2.3" y="4.6" width="7" height="6" fill="#3ea6ee"/><rect x="3.5" y="5.8" width="3" height="2" fill="#a8dcff"/><path d="M2.3 12.5h7M2.3 14.5h7M2.3 16.5h7" stroke="#dcdcdc" stroke-width="1"/></svg>
<div class="t" style="left:373.50px;top:635.89px;font-size:13.5px;color:#1e1e1e;font-weight:normal;">12345009</div>
<div class="t" style="left:571.00px;top:635.89px;font-size:13.5px;color:#8a8a8a;font-weight:normal;">target_phone.bin</div>
<div class="t" style="left:687.00px;top:635.89px;font-size:13.5px;color:#8a8a8a;font-weight:normal;">Phone</div>
<div class="t" style="left:804.00px;top:635.89px;font-size:13.5px;color:#8a8a8a;font-weight:normal;">2</div>
<div class="b" style="left:336.00px;top:683.66px;width:579.00px;height:1.00px;background:#efefef"></div>
<div class="b" style="left:566.00px;top:656.87px;width:1.00px;height:27.29px;background:#f2f2f2"></div>
<div class="b" style="left:682.00px;top:656.87px;width:1.00px;height:27.29px;background:#f2f2f2"></div>
<div class="b" style="left:799.00px;top:656.87px;width:1.00px;height:27.29px;background:#f2f2f2"></div>
<div class="b" style="left:914.00px;top:656.87px;width:1.00px;height:27.29px;background:#f2f2f2"></div>
<svg class="b" style="left:353.00px;top:660.16px" width="12" height="20" viewBox="0 0 12 20"><path d="M9.8 0.5h1.2v4h-1.2z" fill="#6d6d6d"/><rect x="0.5" y="2.5" width="10.5" height="17" rx="1.5" fill="#b9b9b9" stroke="#8a8a8a" stroke-width="1"/><rect x="2.3" y="4.6" width="7" height="6" fill="#3ea6ee"/><rect x="3.5" y="5.8" width="3" height="2" fill="#a8dcff"/><path d="M2.3 12.5h7M2.3 14.5h7M2.3 16.5h7" stroke="#dcdcdc" stroke-width="1"/></svg>
<div class="t" style="left:373.50px;top:663.19px;font-size:13.5px;color:#1e1e1e;font-weight:normal;"></div>
<div class="t" style="left:571.00px;top:663.19px;font-size:13.5px;color:#8a8a8a;font-weight:normal;">target_phone.bin</div>
<div class="t" style="left:687.00px;top:663.19px;font-size:13.5px;color:#8a8a8a;font-weight:normal;">Phone</div>
<div class="t" style="left:804.00px;top:663.19px;font-size:13.5px;color:#8a8a8a;font-weight:normal;">2</div>
<div class="b" style="left:336.00px;top:710.95px;width:579.00px;height:1.00px;background:#efefef"></div>
<div class="b" style="left:566.00px;top:684.16px;width:1.00px;height:27.29px;background:#f2f2f2"></div>
<div class="b" style="left:682.00px;top:684.16px;width:1.00px;height:27.29px;background:#f2f2f2"></div>
<div class="b" style="left:799.00px;top:684.16px;width:1.00px;height:27.29px;background:#f2f2f2"></div>
<div class="b" style="left:914.00px;top:684.16px;width:1.00px;height:27.29px;background:#f2f2f2"></div>
<svg class="b" style="left:353.00px;top:687.45px" width="12" height="20" viewBox="0 0 12 20"><path d="M9.8 0.5h1.2v4h-1.2z" fill="#6d6d6d"/><rect x="0.5" y="2.5" width="10.5" height="17" rx="1.5" fill="#b9b9b9" stroke="#8a8a8a" stroke-width="1"/><rect x="2.3" y="4.6" width="7" height="6" fill="#3ea6ee"/><rect x="3.5" y="5.8" width="3" height="2" fill="#a8dcff"/><path d="M2.3 12.5h7M2.3 14.5h7M2.3 16.5h7" stroke="#dcdcdc" stroke-width="1"/></svg>
<div class="t" style="left:373.50px;top:690.48px;font-size:13.5px;color:#1e1e1e;font-weight:normal;">12345007</div>
<div class="t" style="left:571.00px;top:690.48px;font-size:13.5px;color:#8a8a8a;font-weight:normal;">target_phone.bin</div>
<div class="t" style="left:687.00px;top:690.48px;font-size:13.5px;color:#8a8a8a;font-weight:normal;">Phone</div>
<div class="t" style="left:804.00px;top:690.48px;font-size:13.5px;color:#8a8a8a;font-weight:normal;">2</div>
<div class="b" style="left:336.00px;top:738.24px;width:579.00px;height:1.00px;background:#efefef"></div>
<div class="b" style="left:566.00px;top:711.45px;width:1.00px;height:27.29px;background:#f2f2f2"></div>
<div class="b" style="left:682.00px;top:711.45px;width:1.00px;height:27.29px;background:#f2f2f2"></div>
<div class="b" style="left:799.00px;top:711.45px;width:1.00px;height:27.29px;background:#f2f2f2"></div>
<div class="b" style="left:914.00px;top:711.45px;width:1.00px;height:27.29px;background:#f2f2f2"></div>
<svg class="b" style="left:353.00px;top:714.74px" width="12" height="20" viewBox="0 0 12 20"><path d="M9.8 0.5h1.2v4h-1.2z" fill="#6d6d6d"/><rect x="0.5" y="2.5" width="10.5" height="17" rx="1.5" fill="#b9b9b9" stroke="#8a8a8a" stroke-width="1"/><rect x="2.3" y="4.6" width="7" height="6" fill="#3ea6ee"/><rect x="3.5" y="5.8" width="3" height="2" fill="#a8dcff"/><path d="M2.3 12.5h7M2.3 14.5h7M2.3 16.5h7" stroke="#dcdcdc" stroke-width="1"/></svg>
<div class="t" style="left:373.50px;top:717.76px;font-size:13.5px;color:#1e1e1e;font-weight:normal;">12345006</div>
<div class="t" style="left:571.00px;top:717.76px;font-size:13.5px;color:#8a8a8a;font-weight:normal;">target_phone.bin</div>
<div class="t" style="left:687.00px;top:717.76px;font-size:13.5px;color:#8a8a8a;font-weight:normal;">Phone</div>
<div class="t" style="left:804.00px;top:717.76px;font-size:13.5px;color:#8a8a8a;font-weight:normal;">2</div>
<div class="b" style="left:336.00px;top:765.53px;width:579.00px;height:1.00px;background:#efefef"></div>
<div class="b" style="left:566.00px;top:738.74px;width:1.00px;height:27.29px;background:#f2f2f2"></div>
<div class="b" style="left:682.00px;top:738.74px;width:1.00px;height:27.29px;background:#f2f2f2"></div>
<div class="b" style="left:799.00px;top:738.74px;width:1.00px;height:27.29px;background:#f2f2f2"></div>
<div class="b" style="left:914.00px;top:738.74px;width:1.00px;height:27.29px;background:#f2f2f2"></div>
<svg class="b" style="left:353.00px;top:742.03px" width="12" height="20" viewBox="0 0 12 20"><path d="M9.8 0.5h1.2v4h-1.2z" fill="#6d6d6d"/><rect x="0.5" y="2.5" width="10.5" height="17" rx="1.5" fill="#b9b9b9" stroke="#8a8a8a" stroke-width="1"/><rect x="2.3" y="4.6" width="7" height="6" fill="#3ea6ee"/><rect x="3.5" y="5.8" width="3" height="2" fill="#a8dcff"/><path d="M2.3 12.5h7M2.3 14.5h7M2.3 16.5h7" stroke="#dcdcdc" stroke-width="1"/></svg>
<div class="t" style="left:373.50px;top:745.05px;font-size:13.5px;color:#1e1e1e;font-weight:normal;">12345004</div>
<div class="t" style="left:571.00px;top:745.05px;font-size:13.5px;color:#8a8a8a;font-weight:normal;">target_phone.bin</div>
<div class="t" style="left:687.00px;top:745.05px;font-size:13.5px;color:#8a8a8a;font-weight:normal;">Phone</div>
<div class="t" style="left:804.00px;top:745.05px;font-size:13.5px;color:#8a8a8a;font-weight:normal;">2</div>
<div class="b" style="left:336.00px;top:792.82px;width:579.00px;height:1.00px;background:#efefef"></div>
<div class="b" style="left:566.00px;top:766.03px;width:1.00px;height:27.29px;background:#f2f2f2"></div>
<div class="b" style="left:682.00px;top:766.03px;width:1.00px;height:27.29px;background:#f2f2f2"></div>
<div class="b" style="left:799.00px;top:766.03px;width:1.00px;height:27.29px;background:#f2f2f2"></div>
<div class="b" style="left:914.00px;top:766.03px;width:1.00px;height:27.29px;background:#f2f2f2"></div>
<svg class="b" style="left:353.00px;top:769.32px" width="12" height="20" viewBox="0 0 12 20"><path d="M9.8 0.5h1.2v4h-1.2z" fill="#6d6d6d"/><rect x="0.5" y="2.5" width="10.5" height="17" rx="1.5" fill="#b9b9b9" stroke="#8a8a8a" stroke-width="1"/><rect x="2.3" y="4.6" width="7" height="6" fill="#3ea6ee"/><rect x="3.5" y="5.8" width="3" height="2" fill="#a8dcff"/><path d="M2.3 12.5h7M2.3 14.5h7M2.3 16.5h7" stroke="#dcdcdc" stroke-width="1"/></svg>
<div class="t" style="left:373.50px;top:772.34px;font-size:13.5px;color:#1e1e1e;font-weight:normal;">12345003</div>
<div class="t" style="left:571.00px;top:772.34px;font-size:13.5px;color:#8a8a8a;font-weight:normal;">target_phone.bin</div>
<div class="t" style="left:687.00px;top:772.34px;font-size:13.5px;color:#8a8a8a;font-weight:normal;">Phone</div>
<div class="t" style="left:804.00px;top:772.34px;font-size:13.5px;color:#8a8a8a;font-weight:normal;">2</div>
<div class="b" style="left:336.00px;top:820.11px;width:579.00px;height:1.00px;background:#efefef"></div>
<div class="b" style="left:566.00px;top:793.32px;width:1.00px;height:27.29px;background:#f2f2f2"></div>
<div class="b" style="left:682.00px;top:793.32px;width:1.00px;height:27.29px;background:#f2f2f2"></div>
<div class="b" style="left:799.00px;top:793.32px;width:1.00px;height:27.29px;background:#f2f2f2"></div>
<div class="b" style="left:914.00px;top:793.32px;width:1.00px;height:27.29px;background:#f2f2f2"></div>
<svg class="b" style="left:353.00px;top:796.61px" width="12" height="20" viewBox="0 0 12 20"><path d="M9.8 0.5h1.2v4h-1.2z" fill="#6d6d6d"/><rect x="0.5" y="2.5" width="10.5" height="17" rx="1.5" fill="#b9b9b9" stroke="#8a8a8a" stroke-width="1"/><rect x="2.3" y="4.6" width="7" height="6" fill="#3ea6ee"/><rect x="3.5" y="5.8" width="3" height="2" fill="#a8dcff"/><path d="M2.3 12.5h7M2.3 14.5h7M2.3 16.5h7" stroke="#dcdcdc" stroke-width="1"/></svg>
<div class="t" style="left:373.50px;top:799.63px;font-size:13.5px;color:#1e1e1e;font-weight:normal;">180</div>
<div class="t" style="left:571.00px;top:799.63px;font-size:13.5px;color:#8a8a8a;font-weight:normal;">target_phone.bin</div>
<div class="t" style="left:687.00px;top:799.63px;font-size:13.5px;color:#8a8a8a;font-weight:normal;">Phone</div>
<div class="t" style="left:804.00px;top:799.63px;font-size:13.5px;color:#8a8a8a;font-weight:normal;">2</div>
<div class="b" style="left:336.00px;top:847.40px;width:579.00px;height:1.00px;background:#efefef"></div>
<div class="b" style="left:566.00px;top:820.61px;width:1.00px;height:27.29px;background:#f2f2f2"></div>
<div class="b" style="left:682.00px;top:820.61px;width:1.00px;height:27.29px;background:#f2f2f2"></div>
<div class="b" style="left:799.00px;top:820.61px;width:1.00px;height:27.29px;background:#f2f2f2"></div>
<div class="b" style="left:914.00px;top:820.61px;width:1.00px;height:27.29px;background:#f2f2f2"></div>
<svg class="b" style="left:353.00px;top:823.90px" width="12" height="20" viewBox="0 0 12 20"><path d="M9.8 0.5h1.2v4h-1.2z" fill="#6d6d6d"/><rect x="0.5" y="2.5" width="10.5" height="17" rx="1.5" fill="#b9b9b9" stroke="#8a8a8a" stroke-width="1"/><rect x="2.3" y="4.6" width="7" height="6" fill="#3ea6ee"/><rect x="3.5" y="5.8" width="3" height="2" fill="#a8dcff"/><path d="M2.3 12.5h7M2.3 14.5h7M2.3 16.5h7" stroke="#dcdcdc" stroke-width="1"/></svg>
<div class="t" style="left:373.50px;top:826.92px;font-size:13.5px;color:#1e1e1e;font-weight:normal;">+15715556543</div>
<div class="t" style="left:571.00px;top:826.92px;font-size:13.5px;color:#8a8a8a;font-weight:normal;">target_phone.bin</div>
<div class="t" style="left:687.00px;top:826.92px;font-size:13.5px;color:#8a8a8a;font-weight:normal;">Phone</div>
<div class="t" style="left:804.00px;top:826.92px;font-size:13.5px;color:#8a8a8a;font-weight:normal;">2</div>
<div class="b" style="left:336.00px;top:874.69px;width:579.00px;height:1.00px;background:#efefef"></div>
<div class="b" style="left:566.00px;top:847.90px;width:1.00px;height:27.29px;background:#f2f2f2"></div>
<div class="b" style="left:682.00px;top:847.90px;width:1.00px;height:27.29px;background:#f2f2f2"></div>
<div class="b" style="left:799.00px;top:847.90px;width:1.00px;height:27.29px;background:#f2f2f2"></div>
<div class="b" style="left:914.00px;top:847.90px;width:1.00px;height:27.29px;background:#f2f2f2"></div>
<svg class="b" style="left:353.00px;top:851.19px" width="12" height="20" viewBox="0 0 12 20"><path d="M9.8 0.5h1.2v4h-1.2z" fill="#6d6d6d"/><rect x="0.5" y="2.5" width="10.5" height="17" rx="1.5" fill="#b9b9b9" stroke="#8a8a8a" stroke-width="1"/><rect x="2.3" y="4.6" width="7" height="6" fill="#3ea6ee"/><rect x="3.5" y="5.8" width="3" height="2" fill="#a8dcff"/><path d="M2.3 12.5h7M2.3 14.5h7M2.3 16.5h7" stroke="#dcdcdc" stroke-width="1"/></svg>
<div class="t" style="left:373.50px;top:854.22px;font-size:13.5px;color:#1e1e1e;font-weight:normal;">1511</div>
<div class="t" style="left:571.00px;top:854.22px;font-size:13.5px;color:#8a8a8a;font-weight:normal;">target_phone.bin</div>
<div class="t" style="left:687.00px;top:854.22px;font-size:13.5px;color:#8a8a8a;font-weight:normal;">Phone</div>
<div class="t" style="left:804.00px;top:854.22px;font-size:13.5px;color:#8a8a8a;font-weight:normal;">2</div>
<div class="b" style="left:336.00px;top:901.98px;width:579.00px;height:1.00px;background:#efefef"></div>
<div class="b" style="left:566.00px;top:875.19px;width:1.00px;height:27.29px;background:#f2f2f2"></div>
<div class="b" style="left:682.00px;top:875.19px;width:1.00px;height:27.29px;background:#f2f2f2"></div>
<div class="b" style="left:799.00px;top:875.19px;width:1.00px;height:27.29px;background:#f2f2f2"></div>
<div class="b" style="left:914.00px;top:875.19px;width:1.00px;height:27.29px;background:#f2f2f2"></div>
<svg class="b" style="left:353.00px;top:878.48px" width="12" height="20" viewBox="0 0 12 20"><path d="M9.8 0.5h1.2v4h-1.2z" fill="#6d6d6d"/><rect x="0.5" y="2.5" width="10.5" height="17" rx="1.5" fill="#b9b9b9" stroke="#8a8a8a" stroke-width="1"/><rect x="2.3" y="4.6" width="7" height="6" fill="#3ea6ee"/><rect x="3.5" y="5.8" width="3" height="2" fill="#a8dcff"/><path d="M2.3 12.5h7M2.3 14.5h7M2.3 16.5h7" stroke="#dcdcdc" stroke-width="1"/></svg>
<div class="t" style="left:373.50px;top:881.50px;font-size:13.5px;color:#1e1e1e;font-weight:normal;">12765552468</div>
<div class="t" style="left:571.00px;top:881.50px;font-size:13.5px;color:#8a8a8a;font-weight:normal;">target_phone.bin</div>
<div class="t" style="left:687.00px;top:881.50px;font-size:13.5px;color:#8a8a8a;font-weight:normal;">Phone</div>
<div class="t" style="left:804.00px;top:881.50px;font-size:13.5px;color:#8a8a8a;font-weight:normal;">1</div>
<div class="b" style="left:921.00px;top:243.00px;width:2.50px;height:789.00px;background:#6a6a6a"></div>
<div class="b" style="left:921.00px;top:740.00px;width:2.50px;height:11.50px;background:#c8c8c8"></div>
<div class="b" style="left:921.00px;top:243.00px;width:674.00px;height:2.00px;background:#6a6a6a"></div>
<div class="b" style="left:923.50px;top:245.00px;width:671.50px;height:787.00px;background:#f0f0f0"></div>
<div class="b" style="left:1595.00px;top:243.00px;width:2.50px;height:789.00px;background:#fafafa"></div>
<div class="t" style="left:923.00px;top:247.53px;font-size:13.5px;color:#1e1e1e;font-weight:normal;">example111@test.com</div>
<div class="t" style="right:7.00px;top:247.53px;font-size:13.5px;color:#1e1e1e;font-weight:normal;">13  Results</div>
<div class="b" style="left:924.50px;top:264.50px;width:74.50px;height:26.50px;background:#fff;border:1px solid #a0a0a0;border-bottom:none;box-sizing:border-box"></div>
<div class="t" style="left:933.00px;top:270.52px;font-size:13.5px;color:#1e1e1e;font-weight:normal;">Messages</div>
<div class="b" style="left:999.00px;top:289.00px;width:593.00px;height:1.50px;background:#a0a0a0"></div>
<div class="b" style="left:924.50px;top:290.00px;width:669.50px;height:430.00px;background:#fff"></div>
<div class="b" style="left:924.50px;top:290.50px;width:667.50px;height:29.50px;background:linear-gradient(#ffffff 0%,#ffffff 33%,#f4f6f8 36%,#eff2f5 100%);border-bottom:1px solid #dedede;box-sizing:border-box"></div>
<div class="b" style="left:1063.50px;top:290.00px;width:1.00px;height:30.00px;background:#e2e2e2"></div>
<div class="b" style="left:1260.50px;top:290.00px;width:1.00px;height:30.00px;background:#e2e2e2"></div>
<div class="b" style="left:1457.00px;top:290.00px;width:1.00px;height:30.00px;background:#e2e2e2"></div>
<div class="t" style="left:929.00px;top:301.52px;font-size:13.5px;color:#1e1e1e;font-weight:normal;">Type</div>
<div class="t" style="left:1070.00px;top:301.52px;font-size:13.5px;color:#1e1e1e;font-weight:normal;">From</div>
<div class="t" style="left:1267.00px;top:301.52px;font-size:13.5px;color:#1e1e1e;font-weight:normal;">To</div>
<div class="t" style="left:1464.50px;top:301.52px;font-size:13.5px;color:#1e1e1e;font-weight:normal;">Date</div>
<div class="b" style="left:924.50px;top:348.25px;width:667.50px;height:1.00px;background:#efefef"></div>
<div class="b" style="left:1063.50px;top:321.46px;width:1.00px;height:27.29px;background:#f2f2f2"></div>
<div class="b" style="left:1260.50px;top:321.46px;width:1.00px;height:27.29px;background:#f2f2f2"></div>
<div class="b" style="left:1457.00px;top:321.46px;width:1.00px;height:27.29px;background:#f2f2f2"></div>
<svg class="b" style="left:938.00px;top:326.00px" width="18" height="18" viewBox="0 0 18 18"><rect x="0.5" y="6.5" width="17" height="11" rx="1" fill="#d9d9d9" stroke="#a9a9a9" stroke-width="1"/><rect x="2" y="9" width="14" height="7" fill="#ececec"/><path d="M0.8 7 L9 12 L17.2 7" fill="none" stroke="#c9c9c9" stroke-width="0.8"/><path d="M2 2.2 Q5 0.2 9 1.6 Q13 0.2 16 2.2 V7.2 L9 11 L2 7.2 Z" fill="#ebbd18" stroke="#c99b10" stroke-width="0.6"/><ellipse cx="9" cy="4.5" rx="4" ry="2.2" fill="#f7dc72" opacity="0.7"/><rect x="8" y="0" width="2" height="1.5" fill="#b8b8b8"/></svg>
<div class="t" style="left:959.00px;top:328.07px;font-size:13.5px;color:#1e1e1e;font-weight:normal;">E-Mail</div>
<div class="t" style="left:1068.00px;top:328.07px;font-size:13.5px;color:#8a8a8a;font-weight:normal;">mail-noreply@google.com</div>
<div class="t" style="left:1265.00px;top:328.07px;font-size:13.5px;color:#8a8a8a;font-weight:normal;">example111@test.com</div>
<div class="t" style="left:1462.00px;top:328.07px;font-size:13.5px;color:#8a8a8a;font-weight:normal;">2012-06-06 17:06:19</div>
<div class="b" style="left:924.50px;top:375.54px;width:667.50px;height:1.00px;background:#efefef"></div>
<div class="b" style="left:1063.50px;top:348.75px;width:1.00px;height:27.29px;background:#f2f2f2"></div>
<div class="b" style="left:1260.50px;top:348.75px;width:1.00px;height:27.29px;background:#f2f2f2"></div>
<div class="b" style="left:1457.00px;top:348.75px;width:1.00px;height:27.29px;background:#f2f2f2"></div>
<svg class="b" style="left:938.00px;top:353.29px" width="18" height="18" viewBox="0 0 18 18"><rect x="0.5" y="6.5" width="17" height="11" rx="1" fill="#d9d9d9" stroke="#a9a9a9" stroke-width="1"/><rect x="2" y="9" width="14" height="7" fill="#ececec"/><path d="M0.8 7 L9 12 L17.2 7" fill="none" stroke="#c9c9c9" stroke-width="0.8"/><path d="M2 2.2 Q5 0.2 9 1.6 Q13 0.2 16 2.2 V7.2 L9 11 L2 7.2 Z" fill="#ebbd18" stroke="#c99b10" stroke-width="0.6"/><ellipse cx="9" cy="4.5" rx="4" ry="2.2" fill="#f7dc72" opacity="0.7"/><rect x="8" y="0" width="2" height="1.5" fill="#b8b8b8"/></svg>
<div class="t" style="left:959.00px;top:355.37px;font-size:13.5px;color:#1e1e1e;font-weight:normal;">E-Mail</div>
<div class="t" style="left:1068.00px;top:355.37px;font-size:13.5px;color:#8a8a8a;font-weight:normal;">mail-noreply@google.com</div>
<div class="t" style="left:1265.00px;top:355.37px;font-size:13.5px;color:#8a8a8a;font-weight:normal;">example111@test.com</div>
<div class="t" style="left:1462.00px;top:355.37px;font-size:13.5px;color:#8a8a8a;font-weight:normal;">2012-06-06 17:06:22</div>
<div class="b" style="left:924.50px;top:402.83px;width:667.50px;height:1.00px;background:#efefef"></div>
<div class="b" style="left:1063.50px;top:376.04px;width:1.00px;height:27.29px;background:#f2f2f2"></div>
<div class="b" style="left:1260.50px;top:376.04px;width:1.00px;height:27.29px;background:#f2f2f2"></div>
<div class="b" style="left:1457.00px;top:376.04px;width:1.00px;height:27.29px;background:#f2f2f2"></div>
<svg class="b" style="left:938.00px;top:380.58px" width="18" height="18" viewBox="0 0 18 18"><rect x="0.5" y="6.5" width="17" height="11" rx="1" fill="#d9d9d9" stroke="#a9a9a9" stroke-width="1"/><rect x="2" y="9" width="14" height="7" fill="#ececec"/><path d="M0.8 7 L9 12 L17.2 7" fill="none" stroke="#c9c9c9" stroke-width="0.8"/><path d="M2 2.2 Q5 0.2 9 1.6 Q13 0.2 16 2.2 V7.2 L9 11 L2 7.2 Z" fill="#ebbd18" stroke="#c99b10" stroke-width="0.6"/><ellipse cx="9" cy="4.5" rx="4" ry="2.2" fill="#f7dc72" opacity="0.7"/><rect x="8" y="0" width="2" height="1.5" fill="#b8b8b8"/></svg>
<div class="t" style="left:959.00px;top:382.65px;font-size:13.5px;color:#1e1e1e;font-weight:normal;">E-Mail</div>
<div class="t" style="left:1068.00px;top:382.65px;font-size:13.5px;color:#8a8a8a;font-weight:normal;">mail-noreply@google.com</div>
<div class="t" style="left:1265.00px;top:382.65px;font-size:13.5px;color:#8a8a8a;font-weight:normal;">example111@test.com</div>
<div class="t" style="left:1462.00px;top:382.65px;font-size:13.5px;color:#8a8a8a;font-weight:normal;">2012-06-06 17:06:22</div>
<div class="b" style="left:924.50px;top:430.12px;width:667.50px;height:1.00px;background:#efefef"></div>
<div class="b" style="left:1063.50px;top:403.33px;width:1.00px;height:27.29px;background:#f2f2f2"></div>
<div class="b" style="left:1260.50px;top:403.33px;width:1.00px;height:27.29px;background:#f2f2f2"></div>
<div class="b" style="left:1457.00px;top:403.33px;width:1.00px;height:27.29px;background:#f2f2f2"></div>
<svg class="b" style="left:938.00px;top:407.87px" width="18" height="18" viewBox="0 0 18 18"><rect x="0.5" y="6.5" width="17" height="11" rx="1" fill="#d9d9d9" stroke="#a9a9a9" stroke-width="1"/><rect x="2" y="9" width="14" height="7" fill="#ececec"/><path d="M0.8 7 L9 12 L17.2 7" fill="none" stroke="#c9c9c9" stroke-width="0.8"/><path d="M2 2.2 Q5 0.2 9 1.6 Q13 0.2 16 2.2 V7.2 L9 11 L2 7.2 Z" fill="#ebbd18" stroke="#c99b10" stroke-width="0.6"/><ellipse cx="9" cy="4.5" rx="4" ry="2.2" fill="#f7dc72" opacity="0.7"/><rect x="8" y="0" width="2" height="1.5" fill="#b8b8b8"/></svg>
<div class="t" style="left:959.00px;top:409.94px;font-size:13.5px;color:#1e1e1e;font-weight:normal;">E-Mail</div>
<div class="t" style="left:1068.00px;top:409.94px;font-size:13.5px;color:#8a8a8a;font-weight:normal;">example33333333@test.com</div>
<div class="t" style="left:1265.00px;top:409.94px;font-size:13.5px;color:#8a8a8a;font-weight:normal;">example111@test.com</div>
<div class="t" style="left:1462.00px;top:409.94px;font-size:13.5px;color:#8a8a8a;font-weight:normal;">2012-06-07 13:12:19</div>
<div class="b" style="left:924.50px;top:457.41px;width:667.50px;height:1.00px;background:#efefef"></div>
<div class="b" style="left:1063.50px;top:430.62px;width:1.00px;height:27.29px;background:#f2f2f2"></div>
<div class="b" style="left:1260.50px;top:430.62px;width:1.00px;height:27.29px;background:#f2f2f2"></div>
<div class="b" style="left:1457.00px;top:430.62px;width:1.00px;height:27.29px;background:#f2f2f2"></div>
<div class="b" style="left:924.50px;top:431.22px;width:138.50px;height:26.09px;background:#3399ff;outline:1px dotted #1a1a1a;outline-offset:-1px"></div>
<svg class="b" style="left:938.00px;top:435.16px" width="18" height="18" viewBox="0 0 18 18"><rect x="0.5" y="6.5" width="17" height="11" rx="1" fill="#d9d9d9" stroke="#a9a9a9" stroke-width="1"/><rect x="2" y="9" width="14" height="7" fill="#ececec"/><path d="M0.8 7 L9 12 L17.2 7" fill="none" stroke="#c9c9c9" stroke-width="0.8"/><path d="M2 2.2 Q5 0.2 9 1.6 Q13 0.2 16 2.2 V7.2 L9 11 L2 7.2 Z" fill="#ebbd18" stroke="#c99b10" stroke-width="0.6"/><ellipse cx="9" cy="4.5" rx="4" ry="2.2" fill="#f7dc72" opacity="0.7"/><rect x="8" y="0" width="2" height="1.5" fill="#b8b8b8"/></svg>
<div class="t" style="left:959.00px;top:437.23px;font-size:13.5px;color:#ffffff;font-weight:normal;">E-Mail</div>
<div class="t" style="left:1068.00px;top:437.23px;font-size:13.5px;color:#8a8a8a;font-weight:normal;">example111@test.com</div>
<div class="t" style="left:1265.00px;top:437.23px;font-size:13.5px;color:#8a8a8a;font-weight:normal;">example2@test.com</div>
<div class="t" style="left:1462.00px;top:437.23px;font-size:13.5px;color:#8a8a8a;font-weight:normal;">2012-06-06 17:07:16</div>
<div class="b" style="left:924.50px;top:484.70px;width:667.50px;height:1.00px;background:#efefef"></div>
<div class="b" style="left:1063.50px;top:457.91px;width:1.00px;height:27.29px;background:#f2f2f2"></div>
<div class="b" style="left:1260.50px;top:457.91px;width:1.00px;height:27.29px;background:#f2f2f2"></div>
<div class="b" style="left:1457.00px;top:457.91px;width:1.00px;height:27.29px;background:#f2f2f2"></div>
<svg class="b" style="left:938.00px;top:462.45px" width="18" height="18" viewBox="0 0 18 18"><rect x="0.5" y="6.5" width="17" height="11" rx="1" fill="#d9d9d9" stroke="#a9a9a9" stroke-width="1"/><rect x="2" y="9" width="14" height="7" fill="#ececec"/><path d="M0.8 7 L9 12 L17.2 7" fill="none" stroke="#c9c9c9" stroke-width="0.8"/><path d="M2 2.2 Q5 0.2 9 1.6 Q13 0.2 16 2.2 V7.2 L9 11 L2 7.2 Z" fill="#ebbd18" stroke="#c99b10" stroke-width="0.6"/><ellipse cx="9" cy="4.5" rx="4" ry="2.2" fill="#f7dc72" opacity="0.7"/><rect x="8" y="0" width="2" height="1.5" fill="#b8b8b8"/></svg>
<div class="t" style="left:959.00px;top:464.52px;font-size:13.5px;color:#1e1e1e;font-weight:normal;">E-Mail</div>
<div class="t" style="left:1068.00px;top:464.52px;font-size:13.5px;color:#8a8a8a;font-weight:normal;">example111@test.com</div>
<div class="t" style="left:1265.00px;top:464.52px;font-size:13.5px;color:#8a8a8a;font-weight:normal;">example2@test.com</div>
<div class="t" style="left:1462.00px;top:464.52px;font-size:13.5px;color:#8a8a8a;font-weight:normal;">2012-06-06 17:09:04</div>
<div class="b" style="left:924.50px;top:511.99px;width:667.50px;height:1.00px;background:#efefef"></div>
<div class="b" style="left:1063.50px;top:485.20px;width:1.00px;height:27.29px;background:#f2f2f2"></div>
<div class="b" style="left:1260.50px;top:485.20px;width:1.00px;height:27.29px;background:#f2f2f2"></div>
<div class="b" style="left:1457.00px;top:485.20px;width:1.00px;height:27.29px;background:#f2f2f2"></div>
<svg class="b" style="left:938.00px;top:489.74px" width="18" height="18" viewBox="0 0 18 18"><rect x="0.5" y="6.5" width="17" height="11" rx="1" fill="#d9d9d9" stroke="#a9a9a9" stroke-width="1"/><rect x="2" y="9" width="14" height="7" fill="#ececec"/><path d="M0.8 7 L9 12 L17.2 7" fill="none" stroke="#c9c9c9" stroke-width="0.8"/><path d="M2 2.2 Q5 0.2 9 1.6 Q13 0.2 16 2.2 V7.2 L9 11 L2 7.2 Z" fill="#ebbd18" stroke="#c99b10" stroke-width="0.6"/><ellipse cx="9" cy="4.5" rx="4" ry="2.2" fill="#f7dc72" opacity="0.7"/><rect x="8" y="0" width="2" height="1.5" fill="#b8b8b8"/></svg>
<div class="t" style="left:959.00px;top:491.81px;font-size:13.5px;color:#1e1e1e;font-weight:normal;">E-Mail</div>
<div class="t" style="left:1068.00px;top:491.81px;font-size:13.5px;color:#8a8a8a;font-weight:normal;">example111@test.com</div>
<div class="t" style="left:1265.00px;top:491.81px;font-size:13.5px;color:#8a8a8a;font-weight:normal;">example444@test.com</div>
<div class="t" style="left:1462.00px;top:491.81px;font-size:13.5px;color:#8a8a8a;font-weight:normal;">2012-06-07 12:50:39</div>
<div class="b" style="left:924.50px;top:539.28px;width:667.50px;height:1.00px;background:#efefef"></div>
<div class="b" style="left:1063.50px;top:512.49px;width:1.00px;height:27.29px;background:#f2f2f2"></div>
<div class="b" style="left:1260.50px;top:512.49px;width:1.00px;height:27.29px;background:#f2f2f2"></div>
<div class="b" style="left:1457.00px;top:512.49px;width:1.00px;height:27.29px;background:#f2f2f2"></div>
<svg class="b" style="left:938.00px;top:517.03px" width="18" height="18" viewBox="0 0 18 18"><rect x="0.5" y="6.5" width="17" height="11" rx="1" fill="#d9d9d9" stroke="#a9a9a9" stroke-width="1"/><rect x="2" y="9" width="14" height="7" fill="#ececec"/><path d="M0.8 7 L9 12 L17.2 7" fill="none" stroke="#c9c9c9" stroke-width="0.8"/><path d="M2 2.2 Q5 0.2 9 1.6 Q13 0.2 16 2.2 V7.2 L9 11 L2 7.2 Z" fill="#ebbd18" stroke="#c99b10" stroke-width="0.6"/><ellipse cx="9" cy="4.5" rx="4" ry="2.2" fill="#f7dc72" opacity="0.7"/><rect x="8" y="0" width="2" height="1.5" fill="#b8b8b8"/></svg>
<div class="t" style="left:959.00px;top:519.10px;font-size:13.5px;color:#1e1e1e;font-weight:normal;">E-Mail</div>
<div class="t" style="left:1068.00px;top:519.10px;font-size:13.5px;color:#8a8a8a;font-weight:normal;">example111@test.com</div>
<div class="t" style="left:1265.00px;top:519.10px;font-size:13.5px;color:#8a8a8a;font-weight:normal;">example2@test.com</div>
<div class="t" style="left:1462.00px;top:519.10px;font-size:13.5px;color:#8a8a8a;font-weight:normal;">2012-06-07 12:51:39</div>
<div class="b" style="left:924.50px;top:566.57px;width:667.50px;height:1.00px;background:#efefef"></div>
<div class="b" style="left:1063.50px;top:539.78px;width:1.00px;height:27.29px;background:#f2f2f2"></div>
<div class="b" style="left:1260.50px;top:539.78px;width:1.00px;height:27.29px;background:#f2f2f2"></div>
<div class="b" style="left:1457.00px;top:539.78px;width:1.00px;height:27.29px;background:#f2f2f2"></div>
<svg class="b" style="left:938.00px;top:544.32px" width="18" height="18" viewBox="0 0 18 18"><rect x="0.5" y="6.5" width="17" height="11" rx="1" fill="#d9d9d9" stroke="#a9a9a9" stroke-width="1"/><rect x="2" y="9" width="14" height="7" fill="#ececec"/><path d="M0.8 7 L9 12 L17.2 7" fill="none" stroke="#c9c9c9" stroke-width="0.8"/><path d="M2 2.2 Q5 0.2 9 1.6 Q13 0.2 16 2.2 V7.2 L9 11 L2 7.2 Z" fill="#ebbd18" stroke="#c99b10" stroke-width="0.6"/><ellipse cx="9" cy="4.5" rx="4" ry="2.2" fill="#f7dc72" opacity="0.7"/><rect x="8" y="0" width="2" height="1.5" fill="#b8b8b8"/></svg>
<div class="t" style="left:959.00px;top:546.39px;font-size:13.5px;color:#1e1e1e;font-weight:normal;">E-Mail</div>
<div class="t" style="left:1068.00px;top:546.39px;font-size:13.5px;color:#8a8a8a;font-weight:normal;">example111@test.com</div>
<div class="t" style="left:1265.00px;top:546.39px;font-size:13.5px;color:#8a8a8a;font-weight:normal;">example33333333@test.com</div>
<div class="t" style="left:1462.00px;top:546.39px;font-size:13.5px;color:#8a8a8a;font-weight:normal;">2012-06-07 18:46:52</div>
<div class="b" style="left:924.50px;top:593.86px;width:667.50px;height:1.00px;background:#efefef"></div>
<div class="b" style="left:1063.50px;top:567.07px;width:1.00px;height:27.29px;background:#f2f2f2"></div>
<div class="b" style="left:1260.50px;top:567.07px;width:1.00px;height:27.29px;background:#f2f2f2"></div>
<div class="b" style="left:1457.00px;top:567.07px;width:1.00px;height:27.29px;background:#f2f2f2"></div>
<svg class="b" style="left:938.00px;top:571.61px" width="18" height="18" viewBox="0 0 18 18"><rect x="0.5" y="6.5" width="17" height="11" rx="1" fill="#d9d9d9" stroke="#a9a9a9" stroke-width="1"/><rect x="2" y="9" width="14" height="7" fill="#ececec"/><path d="M0.8 7 L9 12 L17.2 7" fill="none" stroke="#c9c9c9" stroke-width="0.8"/><path d="M2 2.2 Q5 0.2 9 1.6 Q13 0.2 16 2.2 V7.2 L9 11 L2 7.2 Z" fill="#ebbd18" stroke="#c99b10" stroke-width="0.6"/><ellipse cx="9" cy="4.5" rx="4" ry="2.2" fill="#f7dc72" opacity="0.7"/><rect x="8" y="0" width="2" height="1.5" fill="#b8b8b8"/></svg>
<div class="t" style="left:959.00px;top:573.68px;font-size:13.5px;color:#1e1e1e;font-weight:normal;">E-Mail</div>
<div class="t" style="left:1068.00px;top:573.68px;font-size:13.5px;color:#8a8a8a;font-weight:normal;">example111@test.com</div>
<div class="t" style="left:1265.00px;top:573.68px;font-size:13.5px;color:#8a8a8a;font-weight:normal;">example2@test.com</div>
<div class="t" style="left:1462.00px;top:573.68px;font-size:13.5px;color:#8a8a8a;font-weight:normal;">2012-06-06 17:07:16</div>
<div class="b" style="left:924.50px;top:621.15px;width:667.50px;height:1.00px;background:#efefef"></div>
<div class="b" style="left:1063.50px;top:594.36px;width:1.00px;height:27.29px;background:#f2f2f2"></div>
<div class="b" style="left:1260.50px;top:594.36px;width:1.00px;height:27.29px;background:#f2f2f2"></div>
<div class="b" style="left:1457.00px;top:594.36px;width:1.00px;height:27.29px;background:#f2f2f2"></div>
<svg class="b" style="left:938.00px;top:598.90px" width="18" height="18" viewBox="0 0 18 18"><rect x="0.5" y="6.5" width="17" height="11" rx="1" fill="#d9d9d9" stroke="#a9a9a9" stroke-width="1"/><rect x="2" y="9" width="14" height="7" fill="#ececec"/><path d="M0.8 7 L9 12 L17.2 7" fill="none" stroke="#c9c9c9" stroke-width="0.8"/><path d="M2 2.2 Q5 0.2 9 1.6 Q13 0.2 16 2.2 V7.2 L9 11 L2 7.2 Z" fill="#ebbd18" stroke="#c99b10" stroke-width="0.6"/><ellipse cx="9" cy="4.5" rx="4" ry="2.2" fill="#f7dc72" opacity="0.7"/><rect x="8" y="0" width="2" height="1.5" fill="#b8b8b8"/></svg>
<div class="t" style="left:959.00px;top:600.97px;font-size:13.5px;color:#1e1e1e;font-weight:normal;">E-Mail</div>
<div class="t" style="left:1068.00px;top:600.97px;font-size:13.5px;color:#8a8a8a;font-weight:normal;">mail-noreply@google.com</div>
<div class="t" style="left:1265.00px;top:600.97px;font-size:13.5px;color:#8a8a8a;font-weight:normal;">example111@test.com</div>
<div class="t" style="left:1462.00px;top:600.97px;font-size:13.5px;color:#8a8a8a;font-weight:normal;">2012-06-06 17:06:19</div>
<div class="b" style="left:924.50px;top:648.44px;width:667.50px;height:1.00px;background:#efefef"></div>
<div class="b" style="left:1063.50px;top:621.65px;width:1.00px;height:27.29px;background:#f2f2f2"></div>
<div class="b" style="left:1260.50px;top:621.65px;width:1.00px;height:27.29px;background:#f2f2f2"></div>
<div class="b" style="left:1457.00px;top:621.65px;width:1.00px;height:27.29px;background:#f2f2f2"></div>
<svg class="b" style="left:938.00px;top:626.19px" width="18" height="18" viewBox="0 0 18 18"><rect x="0.5" y="6.5" width="17" height="11" rx="1" fill="#d9d9d9" stroke="#a9a9a9" stroke-width="1"/><rect x="2" y="9" width="14" height="7" fill="#ececec"/><path d="M0.8 7 L9 12 L17.2 7" fill="none" stroke="#c9c9c9" stroke-width="0.8"/><path d="M2 2.2 Q5 0.2 9 1.6 Q13 0.2 16 2.2 V7.2 L9 11 L2 7.2 Z" fill="#ebbd18" stroke="#c99b10" stroke-width="0.6"/><ellipse cx="9" cy="4.5" rx="4" ry="2.2" fill="#f7dc72" opacity="0.7"/><rect x="8" y="0" width="2" height="1.5" fill="#b8b8b8"/></svg>
<div class="t" style="left:959.00px;top:628.26px;font-size:13.5px;color:#1e1e1e;font-weight:normal;">E-Mail</div>
<div class="t" style="left:1068.00px;top:628.26px;font-size:13.5px;color:#8a8a8a;font-weight:normal;">mail-noreply@google.com</div>
<div class="t" style="left:1265.00px;top:628.26px;font-size:13.5px;color:#8a8a8a;font-weight:normal;">example111@test.com</div>
<div class="t" style="left:1462.00px;top:628.26px;font-size:13.5px;color:#8a8a8a;font-weight:normal;">2012-06-06 17:06:22</div>
<div class="b" style="left:924.50px;top:675.73px;width:667.50px;height:1.00px;background:#efefef"></div>
<div class="b" style="left:1063.50px;top:648.94px;width:1.00px;height:27.29px;background:#f2f2f2"></div>
<div class="b" style="left:1260.50px;top:648.94px;width:1.00px;height:27.29px;background:#f2f2f2"></div>
<div class="b" style="left:1457.00px;top:648.94px;width:1.00px;height:27.29px;background:#f2f2f2"></div>
<svg class="b" style="left:938.00px;top:653.48px" width="18" height="18" viewBox="0 0 18 18"><rect x="0.5" y="6.5" width="17" height="11" rx="1" fill="#d9d9d9" stroke="#a9a9a9" stroke-width="1"/><rect x="2" y="9" width="14" height="7" fill="#ececec"/><path d="M0.8 7 L9 12 L17.2 7" fill="none" stroke="#c9c9c9" stroke-width="0.8"/><path d="M2 2.2 Q5 0.2 9 1.6 Q13 0.2 16 2.2 V7.2 L9 11 L2 7.2 Z" fill="#ebbd18" stroke="#c99b10" stroke-width="0.6"/><ellipse cx="9" cy="4.5" rx="4" ry="2.2" fill="#f7dc72" opacity="0.7"/><rect x="8" y="0" width="2" height="1.5" fill="#b8b8b8"/></svg>
<div class="t" style="left:959.00px;top:655.55px;font-size:13.5px;color:#1e1e1e;font-weight:normal;">E-Mail</div>
<div class="t" style="left:1068.00px;top:655.55px;font-size:13.5px;color:#8a8a8a;font-weight:normal;">mail-noreply@google.com</div>
<div class="t" style="left:1265.00px;top:655.55px;font-size:13.5px;color:#8a8a8a;font-weight:normal;">example111@test.com</div>
<div class="t" style="left:1462.00px;top:655.55px;font-size:13.5px;color:#8a8a8a;font-weight:normal;">2012-06-06 17:06:22</div>
<div class="b" style="left:924.50px;top:720.00px;width:669.50px;height:20.00px;background:#efefef"></div>
<svg class="b" style="left:929.00px;top:724.00px" width="10" height="12" viewBox="0 0 10 12"><path d="M7 2 L3 6 L7 10Z" fill="#444"/></svg>
<svg class="b" style="left:1578.00px;top:724.00px" width="10" height="12" viewBox="0 0 10 12"><path d="M3 2 L7 6 L3 10Z" fill="#444"/></svg>
<div class="b" style="left:946.00px;top:721.00px;width:368.00px;height:18.00px;border:1px solid #9a9a9a;border-radius:3px;box-sizing:border-box;background:linear-gradient(#fafafa,#e6e6e6 50%,#d0d0d0)"></div>
<svg class="b" style="left:1123.00px;top:725.00px" width="12" height="10" viewBox="0 0 12 10"><path d="M2.5 1v8M5.5 1v8M8.5 1v8" stroke="#666" stroke-width="1"/></svg>
<div class="b" style="left:924.50px;top:740.00px;width:669.50px;height:11.00px;background:#f0f0f0"></div>
<div class="b" style="left:921.00px;top:751.00px;width:674.00px;height:2.00px;background:#9d9d9d"></div>
<div class="b" style="left:930.00px;top:759.00px;width:658.00px;height:103.00px;background:#cbcbcb"></div>
<div class="t" style="left:935.50px;top:767.52px;font-size:13.5px;color:#1e1e1e;font-weight:normal;">From:</div>
<div class="t" style="left:982.50px;top:767.52px;font-size:13.5px;color:#1e1e1e;font-weight:normal;">example111@test.com;</div>
<div class="t" style="right:19.00px;top:767.52px;font-size:13.5px;color:#1e1e1e;font-weight:normal;">2012-06-06 17:07:16 EDT</div>
<div class="t" style="left:935.50px;top:792.02px;font-size:13.5px;color:#1e1e1e;font-weight:normal;">To:</div>
<div class="t" style="left:982.50px;top:792.02px;font-size:13.5px;color:#1e1e1e;font-weight:normal;">example2@test.com;</div>
<div class="t" style="left:935.50px;top:816.52px;font-size:13.5px;color:#1e1e1e;font-weight:normal;">CC:</div>
<div class="t" style="left:935.50px;top:841.02px;font-size:13.5px;color:#1e1e1e;font-weight:normal;">Subject:</div>
<div class="t" style="left:992.50px;top:841.02px;font-size:13.5px;color:#1e1e1e;font-weight:normal;">Hi</div>
<div class="b" style="left:930.00px;top:896.50px;width:656.00px;height:2.00px;background:#a6a6a6"></div>
<div class="b" style="left:932.50px;top:874.50px;width:61.50px;height:22.50px;background:linear-gradient(#f3f3f3,#dcdcdc);border:1px solid #a9a9a9;border-bottom:none;box-sizing:border-box"></div>
<div class="t" style="left:938.50px;top:880.02px;font-size:13.5px;color:#1e1e1e;font-weight:normal;">Headers</div>
<div class="b" style="left:1081.50px;top:874.50px;width:37.50px;height:22.50px;background:linear-gradient(#f3f3f3,#dcdcdc);border:1px solid #a9a9a9;border-bottom:none;box-sizing:border-box"></div>
<div class="t" style="left:1087.00px;top:880.02px;font-size:13.5px;color:#b0b0b0;font-weight:normal;">RTF</div>
<div class="b" style="left:1037.00px;top:874.50px;width:45.00px;height:22.50px;background:linear-gradient(#f3f3f3,#dcdcdc);border:1px solid #a9a9a9;border-bottom:none;box-sizing:border-box"></div>
<div class="t" style="left:1041.00px;top:880.02px;font-size:13.5px;color:#b0b0b0;font-weight:normal;">HTML</div>
<div class="b" style="left:1119.00px;top:874.50px;width:108.00px;height:22.50px;background:linear-gradient(#f3f3f3,#dcdcdc);border:1px solid #a9a9a9;border-bottom:none;box-sizing:border-box"></div>
<div class="t" style="left:1125.00px;top:880.02px;font-size:13.5px;color:#b0b0b0;font-weight:normal;">Attachments (0)</div>
<div class="b" style="left:993.00px;top:872.00px;width:45.00px;height:26.00px;background:#fff;border:1px solid #a0a0a0;border-bottom:none;box-sizing:border-box"></div>
<div class="t" style="left:1001.00px;top:878.02px;font-size:13.5px;color:#1e1e1e;font-weight:normal;">Text</div>
<div class="b" style="left:930.00px;top:898.00px;width:658.00px;height:126.00px;background:#fff;border:1px solid #8f8f8f;border-top:none;box-sizing:border-box"></div>
<div class="t" style="left:933.50px;top:904.52px;font-size:13.5px;color:#1e1e1e;font-weight:normal;">this is a test</div>
<div class="b" style="left:1567.00px;top:899.00px;width:20.00px;height:124.00px;background:#f0f0f0"></div>
<svg class="b" style="left:1571.00px;top:906.00px" width="12" height="10" viewBox="0 0 12 10"><path d="M2 7 L6 3 L10 7Z" fill="#444"/></svg>
<svg class="b" style="left:1571.00px;top:1007.00px" width="12" height="10" viewBox="0 0 12 10"><path d="M2 3 L6 7 L10 3Z" fill="#444"/></svg>
<div class="b" style="left:1568.00px;top:923.50px;width:17.00px;height:22.50px;border:1px solid #9a9a9a;border-radius:2px;box-sizing:border-box;background:linear-gradient(90deg,#fafafa,#e2e2e2)"></div>
<svg class="b" style="left:1571.00px;top:929.00px" width="12" height="12" viewBox="0 0 12 12"><path d="M2.5 2.5h7M2.5 5h7M2.5 7.5h7M2.5 10h7" stroke="#555" stroke-width="1"/></svg>
<div class="b" style="left:1.60px;top:1053.30px;width:100.90px;height:109.90px;background:#39b3fa"></div>
<svg class="b" style="left:0;top:1040px" width="440" height="160" viewBox="0 1040 440 160">
<g fill="#ffffff">
<path d="M30.2 1069.5 H75 V1085.1 H47.9 V1101.3 H74 V1116.9 H47.9 V1132 H75 V1148.1 H30.2Z"/>
<path d="M113.2 1069.5 H177.3 L140.1 1131.7 H175.8 V1147.9 H108 L146.5 1085.3 H113.2Z"/>
<rect x="251.3" y="1081.5" width="17.5" height="42"/>
<rect x="244.4" y="1099" width="34.1" height="13"/>
<path fill-rule="evenodd" d="M282 1122.5 A28.5 25.5 0 1 0 339 1122.5 A28.5 25.5 0 1 0 282 1122.5Z M300.5 1123.5 A11.5 11.5 0 1 0 323.5 1123.5 A11.5 11.5 0 1 0 300.5 1123.5Z"/>
<rect x="324" y="1097" width="15" height="51"/>
<path d="M350 1148 V1097 H367 V1106 C372 1100 380 1097 392 1097 V1113 C376 1113 367 1119 367 1132 V1148Z"/>
<rect x="401.5" y="1081.5" width="17" height="42"/>
<rect x="393.5" y="1099.5" width="34" height="12.5"/>
</g>
<g fill="none" stroke="#ffffff">
<path stroke-width="16.5" d="M233 1087 C229 1079.5 220.5 1076.25 211 1076.25 C198 1076.25 190 1083 190 1093.5 C190 1104.5 199 1107.5 211 1109.5 C224 1111.5 232 1115.5 232 1126 C232 1136 223 1141.2 211 1141.2 C199 1141.2 190.5 1136.5 186.5 1129"/>
<path stroke-width="17" d="M260.05 1118 Q260.05 1140 272 1140 H280.6"/>
<path stroke-width="17" d="M410 1118 Q410 1139.5 421 1139.5 H429"/>
</g>
</svg>
<div class="t" style="left:176.5px;top:1166.8px;font-size:33px;color:#fff;font-weight:bold;letter-spacing:1.9px;-webkit-text-stroke:0.9px #fff;transform:scaleY(1.19);transform-origin:0 0">SOFTWARE</div>
</body></html>
